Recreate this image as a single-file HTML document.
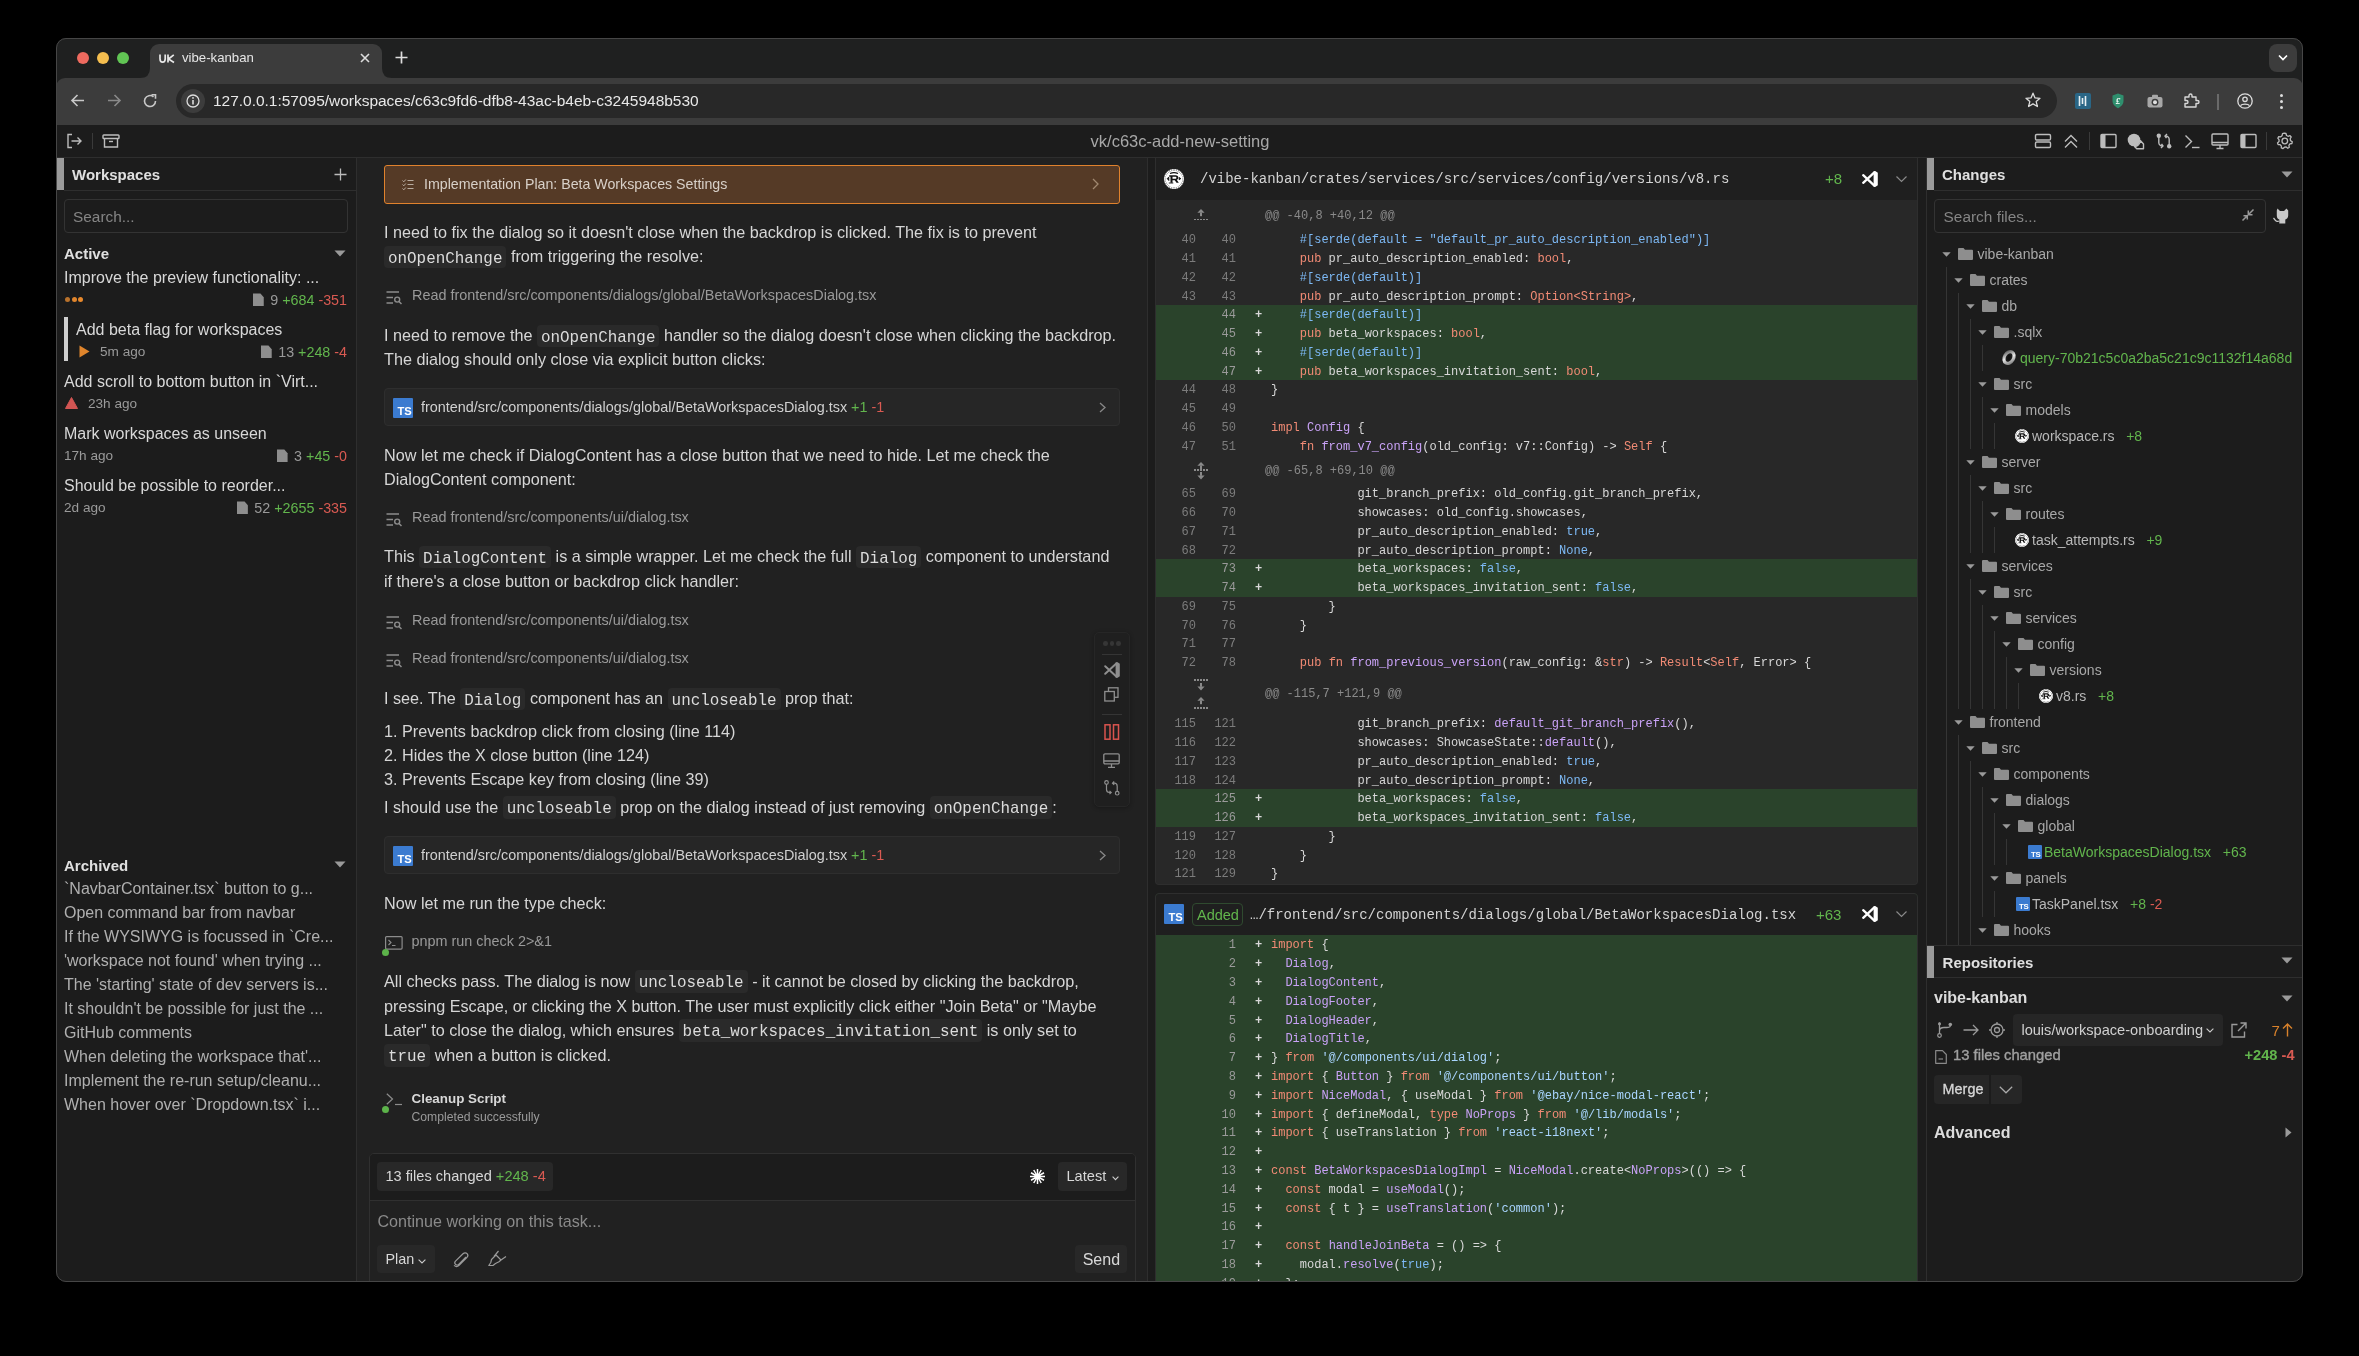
<!DOCTYPE html>
<html><head><meta charset="utf-8">
<style>
*{box-sizing:border-box;margin:0;padding:0}
html,body{width:2359px;height:1356px;background:#000;overflow:hidden;font-family:"Liberation Sans",sans-serif;color:#ddd}
.a{position:absolute}
#root{position:absolute;left:0;top:0;width:2359px;height:1356px;clip-path:inset(38px 56px 74px 56px round 10px);will-change:transform}
svg{display:block;position:absolute;overflow:visible}
.t{position:absolute;white-space:nowrap;line-height:1}
.c{font-family:"Liberation Mono",monospace;font-size:15.9px;background:#2a2a2a;border-radius:4px;padding:3.5px 4px 0.8px;color:#dcdcdc}
</style></head><body>
<div id="root">
<div class="a" style="left:56px;top:38px;width:2247px;height:50px;background:#1f2020;"></div>
<div class="a" style="left:56px;top:78px;width:2247px;height:47px;background:#3c3c3c;border-radius:9px 9px 0 0;"></div>
<div class="a" style="left:56px;top:125px;width:2247px;height:33px;background:#1c1c1c;"></div>
<div class="a" style="left:56px;top:157px;width:2247px;height:1px;background:#2e2e2e;"></div>
<div class="a" style="left:56px;top:158px;width:300px;height:1124px;background:#1c1c1c;"></div>
<div class="a" style="left:356px;top:158px;width:1px;height:1124px;background:#2e2e2e;"></div>
<div class="a" style="left:357px;top:158px;width:790px;height:1124px;background:#212121;"></div>
<div class="a" style="left:1147px;top:158px;width:1px;height:1124px;background:#2e2e2e;"></div>
<div class="a" style="left:1148px;top:158px;width:778px;height:1124px;background:#1c1c1c;"></div>
<div class="a" style="left:1926px;top:158px;width:1px;height:1124px;background:#2e2e2e;"></div>
<div class="a" style="left:1927px;top:158px;width:376px;height:1124px;background:#1c1c1c;"></div>
<div class="a" style="left:77px;top:52px;width:12px;height:12px;border-radius:50%;background:#ee6a5f"></div>
<div class="a" style="left:97px;top:52px;width:12px;height:12px;border-radius:50%;background:#f5be4f"></div>
<div class="a" style="left:117px;top:52px;width:12px;height:12px;border-radius:50%;background:#61c554"></div>
<div class="a" style="left:150px;top:44px;width:232px;height:34px;background:#3c3c3c;border-radius:9px 9px 0 0"></div>
<svg style="left:140px;top:68px" width="10" height="10" viewBox="0 0 10 10"><path d="M10 0 V10 H0 Q10 10 10 0Z" fill="#3c3c3c"/></svg>
<svg style="left:382px;top:68px" width="10" height="10" viewBox="0 0 10 10"><path d="M0 0 V10 H10 Q0 10 0 0Z" fill="#3c3c3c"/></svg>
<svg style="left:159px;top:54px;" width="17" height="9" viewBox="0 0 17 9" fill="none"><path d="M1 0.5V4.8Q1 8.2 3.6 8.2Q6.2 8.2 6.2 4.8V0.5M9 0.5V8.5M14.8 0.8L9.5 5L15 8.5" stroke="#e8e8e8" stroke-width="1.7" fill="none"/></svg>
<div class="t" style="left:182px;top:51.40px;font-size:13.2px;color:#e6e6e6;">vibe-kanban</div>
<svg style="left:360px;top:53px;" width="10" height="10" viewBox="0 0 10 10" fill="none"><path d="M1 1L9 9M9 1L1 9" stroke="#ddd" stroke-width="1.6"/></svg>
<svg style="left:395px;top:51px;" width="13" height="13" viewBox="0 0 13 13" fill="none"><path d="M6.5 0.5V12.5M0.5 6.5H12.5" stroke="#ddd" stroke-width="1.7"/></svg>
<div class="a" style="left:2269px;top:44px;width:28px;height:28px;border-radius:8px;background:#3c3c3c"></div>
<svg style="left:2278px;top:54px;" width="10" height="7" viewBox="0 0 10 7" fill="none"><path d="M1 1.5L5 5.5L9 1.5" stroke="#fff" stroke-width="1.7"/></svg>
<svg style="left:71px;top:94px;" width="14" height="13" viewBox="0 0 14 13" fill="none"><path d="M13 6.5H1.5M6.5 1L1 6.5L6.5 12" stroke="#c8c8c8" stroke-width="1.6"/></svg>
<svg style="left:107px;top:94px;" width="14" height="13" viewBox="0 0 14 13" fill="none"><path d="M1 6.5H12.5M7.5 1L13 6.5L7.5 12" stroke="#8a8a8a" stroke-width="1.6"/></svg>
<svg style="left:143px;top:94px;" width="14" height="14" viewBox="0 0 14 14" fill="none"><path d="M12.5 7A5.5 5.5 0 1 1 10.5 2.8" stroke="#c8c8c8" stroke-width="1.6"/><path d="M8.5 0.8H12.5V4.8" stroke="#c8c8c8" stroke-width="1.6"/></svg>
<div class="a" style="left:176px;top:84px;width:1881px;height:34px;border-radius:17px;background:#282828"></div>
<div class="a" style="left:181px;top:89px;width:24px;height:24px;border-radius:50%;background:#3c3c3c"></div>
<svg style="left:186px;top:94px;" width="14" height="14" viewBox="0 0 14 14" fill="none"><circle cx="7" cy="7" r="6" stroke="#ddd" stroke-width="1.3"/><path d="M7 6V10.5" stroke="#ddd" stroke-width="1.6"/><circle cx="7" cy="3.9" r="0.9" fill="#ddd"/></svg>
<div class="t" style="left:213px;top:93.25px;font-size:15.5px;color:#e8e8e8;letter-spacing:-0.02px;">127.0.0.1:57095/workspaces/c63c9fd6-dfb8-43ac-b4eb-c3245948b530</div>
<svg style="left:2025px;top:92px;" width="16" height="16" viewBox="0 0 16 16" fill="none"><path d="M8 1.2L10 5.9L15 6.3L11.2 9.6L12.4 14.5L8 11.9L3.6 14.5L4.8 9.6L1 6.3L6 5.9Z" stroke="#ddd" stroke-width="1.3" stroke-linejoin="round"/></svg>
<div class="a" style="left:2075px;top:93px;width:16px;height:16px;border-radius:2px;background:#2a6686"></div>
<svg style="left:2078px;top:95px;" width="10" height="12" viewBox="0 0 10 12" fill="none"><path d="M1.5 1V11M4.5 3V9M7.5 1V11" stroke="#e8f0f4" stroke-width="1.6"/></svg>
<svg style="left:2112px;top:93px;" width="12" height="16" viewBox="0 0 12 16" fill="none"><path d="M6 0.5L11.5 2.5V8C11.5 11.5 8.5 14 6 15.2C3.5 14 0.5 11.5 0.5 8V2.5Z" fill="#2f8f6e"/><text x="6" y="11" font-size="9" font-style="italic" font-weight="bold" fill="#fff" text-anchor="middle" font-family="Liberation Serif">£</text></svg>
<svg style="left:2147px;top:94px;" width="16" height="14" viewBox="0 0 16 14" fill="none"><rect x="0.5" y="3" width="15" height="10.5" rx="2" fill="#a8a8a8"/><rect x="5" y="0.8" width="6" height="3" rx="1" fill="#a8a8a8"/><circle cx="8" cy="8.2" r="3.4" fill="#3c3c3c"/><circle cx="8" cy="8.2" r="2" fill="#e0e0e0"/></svg>
<svg style="left:2184px;top:93px;" width="16" height="16" viewBox="0 0 16 16" fill="none"><path d="M1 4H5V2.5A1.5 1.5 0 0 1 8 2.5V4H12V7.5H13.5A1.5 1.5 0 0 1 13.5 10.5H12V14H1V10.5H2.5A1.5 1.5 0 0 0 2.5 7.5H1Z" stroke="#d8d8d8" stroke-width="1.4" stroke-linejoin="round"/></svg>
<div class="a" style="left:2217px;top:94px;width:1.5px;height:16px;background:#6a6a6a;"></div>
<svg style="left:2237px;top:93px;" width="16" height="16" viewBox="0 0 16 16" fill="none"><circle cx="8" cy="8" r="7.2" stroke="#ddd" stroke-width="1.3"/><circle cx="8" cy="6.3" r="2.2" stroke="#ddd" stroke-width="1.3"/><path d="M3.5 12.6C5 10.6 11 10.6 12.5 12.6" stroke="#ddd" stroke-width="1.3"/></svg>
<div class="a" style="left:2279.5px;top:93.5px;width:3px;height:3px;border-radius:50%;background:#ddd"></div>
<div class="a" style="left:2279.5px;top:99.5px;width:3px;height:3px;border-radius:50%;background:#ddd"></div>
<div class="a" style="left:2279.5px;top:105.5px;width:3px;height:3px;border-radius:50%;background:#ddd"></div>
<svg style="left:66px;top:133px;" width="17" height="16" viewBox="0 0 17 16" fill="none"><path d="M6 1.5H2V14.5H6" stroke="#bdbdbd" stroke-width="1.4"/><path d="M5.5 8H15M11.5 4.5L15 8L11.5 11.5" stroke="#bdbdbd" stroke-width="1.4"/></svg>
<div class="a" style="left:92px;top:133px;width:1px;height:16px;background:#3a3a3a;"></div>
<svg style="left:102px;top:134px;" width="18" height="14" viewBox="0 0 18 14" fill="none"><rect x="1" y="1" width="16" height="3.5" rx="0.8" stroke="#bdbdbd" stroke-width="1.4"/><path d="M2.5 4.5V13H15.5V4.5" stroke="#bdbdbd" stroke-width="1.4"/><path d="M7 7.5H11" stroke="#bdbdbd" stroke-width="1.4"/></svg>
<div class="t" style="left:1180px;top:132.75px;font-size:16.5px;color:#a8a8a8;transform:translateX(-50%);">vk/c63c-add-new-setting</div>
<svg style="left:2034.0px;top:133.0px;" width="18" height="16" viewBox="0 0 18 16" fill="none"><rect x="1.5" y="1.5" width="15" height="5.5" rx="1.2" stroke="#bdbdbd" stroke-width="1.4"/><rect x="1.5" y="9" width="15" height="5.5" rx="1.2" stroke="#bdbdbd" stroke-width="1.4"/></svg>
<svg style="left:2063.0px;top:133.0px;" width="16" height="16" viewBox="0 0 16 16" fill="none"><path d="M2 8.5L8 2.5L14 8.5M2 14.5L8 8.5L14 14.5" stroke="#bdbdbd" stroke-width="1.4"/></svg>
<div class="a" style="left:2089px;top:132px;width:1px;height:18px;background:#3a3a3a;"></div>
<svg style="left:2099.5px;top:133.0px;" width="17" height="16" viewBox="0 0 17 16" fill="none"><rect x="1" y="1.5" width="15" height="13" rx="1" stroke="#bdbdbd" stroke-width="1.4"/><rect x="1" y="1.5" width="4.5" height="13" fill="#bdbdbd"/></svg>
<svg style="left:2127.0px;top:132.5px;" width="18" height="17" viewBox="0 0 18 17" fill="none"><circle cx="7" cy="7" r="6.3" fill="#bdbdbd"/><path d="M7.5 13.5A6.2 6.2 0 0 0 13.3 7.6L16.5 11V15.8H9.8Z" stroke="#bdbdbd" stroke-width="1.4" stroke-linejoin="round"/></svg>
<svg style="left:2156.0px;top:132.5px;" width="16" height="17" viewBox="0 0 16 17" fill="none"><circle cx="2.8" cy="2.8" r="2.2" fill="#bdbdbd"/><circle cx="13.2" cy="13.3" r="2.2" fill="#bdbdbd"/><path d="M2.8 4V9.5C2.8 11.5 4.5 13 6.5 13" stroke="#bdbdbd" stroke-width="1.4"/><path d="M5.5 10.8L7 13L5 15" stroke="#bdbdbd" stroke-width="1.4"/><path d="M13.2 12V6.5C13.2 4.5 11.5 3 9.5 3" stroke="#bdbdbd" stroke-width="1.4"/><path d="M10.5 5.2L9 3L11 1" stroke="#bdbdbd" stroke-width="1.4"/></svg>
<svg style="left:2183.5px;top:132.5px;" width="17" height="17" viewBox="0 0 17 17" fill="none"><path d="M1.5 2.5L7.5 8.5L1.5 14.5" stroke="#bdbdbd" stroke-width="1.4"/><path d="M8 14.5H15.5" stroke="#bdbdbd" stroke-width="1.4"/></svg>
<svg style="left:2211.0px;top:132.5px;" width="18" height="17" viewBox="0 0 18 17" fill="none"><rect x="1" y="1" width="16" height="11" rx="1" stroke="#bdbdbd" stroke-width="1.4"/><path d="M1 9.5H17M9 12V15.5M5.5 15.5H12.5" stroke="#bdbdbd" stroke-width="1.4"/></svg>
<svg style="left:2239.5px;top:133.0px;" width="17" height="16" viewBox="0 0 17 16" fill="none"><rect x="1" y="1.5" width="15" height="13" rx="1" stroke="#bdbdbd" stroke-width="1.4"/><rect x="1" y="1.5" width="4.5" height="13" fill="#bdbdbd"/></svg>
<div class="a" style="left:2266px;top:132px;width:1px;height:18px;background:#3a3a3a;"></div>
<svg style="left:2276.0px;top:132.0px;" width="18" height="18" viewBox="0 0 18 18" fill="none"><path d="M8.2 1.2L10 1.5L10.5 3.5L12 4.3L14 3.6L15.2 5L14.2 6.8L14.5 8.6L16.3 9.7L15.9 11.5L13.9 11.9L12.9 13.3L13.3 15.3L11.8 16.3L10.2 15L8.5 15.2L7 16.6L5.3 15.9L5.3 13.9L4.1 12.7L2.1 12.6L1.5 10.9L3 9.6L3.1 7.8L1.8 6.2L2.7 4.6L4.7 4.8L6.1 3.7L6.5 1.7Z" stroke="#bdbdbd" stroke-width="1.3" stroke-linejoin="round"/><circle cx="8.8" cy="9" r="2.8" stroke="#bdbdbd" stroke-width="1.3"/></svg>
<div class="a" style="left:56px;top:158px;width:8px;height:32px;background:#9a9a9a;"></div>
<div class="t" style="left:72px;top:167.30px;font-size:15px;color:#e0e0e0;font-weight:bold;">Workspaces</div>
<svg style="left:334px;top:168px;" width="13" height="13" viewBox="0 0 13 13" fill="none"><path d="M6.5 0.5V12.5M0.5 6.5H12.5" stroke="#bbb" stroke-width="1.3"/></svg>
<div class="a" style="left:64px;top:190px;width:292px;height:1px;background:#2e2e2e;"></div>
<div class="a" style="left:64px;top:199px;width:284px;height:34px;border:1px solid #333;border-radius:4px"></div>
<div class="t" style="left:73px;top:208.96px;font-size:15.4px;color:#858585;">Search...</div>
<div class="t" style="left:64px;top:246.30px;font-size:15px;color:#e0e0e0;font-weight:bold;">Active</div>
<svg style="left:334px;top:250px;" width="12" height="7" viewBox="0 0 12 7" fill="none"><path d="M0.5 0.5H11.5L6 6.5Z" fill="#9a9a9a"/></svg>
<div class="t" style="left:64px;top:270.46px;font-size:16px;color:#d8d8d8;">Improve the preview functionality: ...</div>
<div class="a" style="left:64.5px;top:296.5px;width:5px;height:5px;border-radius:50%;background:#b9722c"></div>
<div class="a" style="left:71.5px;top:296.5px;width:5px;height:5px;border-radius:50%;background:#e0852c"></div>
<div class="a" style="left:77.5px;top:296.5px;width:5px;height:5px;border-radius:50%;background:#e8892c"></div>
<div class="t" style="right:2012px;top:292.90px;font-size:14.3px;color:#999"><span style="display:inline-block;width:11px;height:12.5px;margin-right:6.5px;vertical-align:-1px;background:#8e8e8e;clip-path:polygon(0 0,70% 0,100% 30%,100% 100%,0 100%)"></span>9 <span style="color:#62b64d">+684</span> <span style="color:#d95a52">-351</span></div>
<div class="a" style="left:64px;top:317px;width:4px;height:44px;background:#cfcfcf;"></div>
<div class="t" style="left:76px;top:322.46px;font-size:16px;color:#d8d8d8;">Add beta flag for workspaces</div>
<svg style="left:79px;top:345px;" width="11" height="13" viewBox="0 0 11 13" fill="none"><path d="M0.5 0.5L10.5 6.5L0.5 12.5Z" fill="#e0852c"/></svg>
<div class="t" style="left:100px;top:345.49px;font-size:13.6px;color:#9a9a9a;">5m ago</div>
<div class="t" style="right:2012px;top:344.90px;font-size:14.3px;color:#999"><span style="display:inline-block;width:11px;height:12.5px;margin-right:6.5px;vertical-align:-1px;background:#8e8e8e;clip-path:polygon(0 0,70% 0,100% 30%,100% 100%,0 100%)"></span>13 <span style="color:#62b64d">+248</span> <span style="color:#d95a52">-4</span></div>
<div class="t" style="left:64px;top:374.46px;font-size:16px;color:#d8d8d8;">Add scroll to bottom button in `Virt...</div>
<svg style="left:65px;top:397px;" width="13" height="12" viewBox="0 0 13 12" fill="none"><path d="M6.5 0.5L12.5 11.5H0.5Z" fill="#d25553" stroke="#d25553" stroke-linejoin="round"/></svg>
<div class="t" style="left:88px;top:397.49px;font-size:13.6px;color:#9a9a9a;">23h ago</div>
<div class="t" style="left:64px;top:426.46px;font-size:16px;color:#d8d8d8;">Mark workspaces as unseen</div>
<div class="t" style="left:64px;top:449.49px;font-size:13.6px;color:#9a9a9a;">17h ago</div>
<div class="t" style="right:2012px;top:448.90px;font-size:14.3px;color:#999"><span style="display:inline-block;width:11px;height:12.5px;margin-right:6.5px;vertical-align:-1px;background:#8e8e8e;clip-path:polygon(0 0,70% 0,100% 30%,100% 100%,0 100%)"></span>3 <span style="color:#62b64d">+45</span> <span style="color:#d95a52">-0</span></div>
<div class="t" style="left:64px;top:478.46px;font-size:16px;color:#d8d8d8;">Should be possible to reorder...</div>
<div class="t" style="left:64px;top:501.49px;font-size:13.6px;color:#9a9a9a;">2d ago</div>
<div class="t" style="right:2012px;top:500.90px;font-size:14.3px;color:#999"><span style="display:inline-block;width:11px;height:12.5px;margin-right:6.5px;vertical-align:-1px;background:#8e8e8e;clip-path:polygon(0 0,70% 0,100% 30%,100% 100%,0 100%)"></span>52 <span style="color:#62b64d">+2655</span> <span style="color:#d95a52">-335</span></div>
<div class="t" style="left:64px;top:857.80px;font-size:15px;color:#e0e0e0;font-weight:bold;">Archived</div>
<svg style="left:334px;top:861px;" width="12" height="7" viewBox="0 0 12 7" fill="none"><path d="M0.5 0.5H11.5L6 6.5Z" fill="#9a9a9a"/></svg>
<div class="t" style="left:64px;top:881.46px;font-size:16px;color:#b0b0b0;">`NavbarContainer.tsx` button to g...</div>
<div class="t" style="left:64px;top:905.46px;font-size:16px;color:#b0b0b0;">Open command bar from navbar</div>
<div class="t" style="left:64px;top:929.46px;font-size:16px;color:#b0b0b0;">If the WYSIWYG is focussed in `Cre...</div>
<div class="t" style="left:64px;top:953.46px;font-size:16px;color:#b0b0b0;">'workspace not found' when trying ...</div>
<div class="t" style="left:64px;top:977.46px;font-size:16px;color:#b0b0b0;">The 'starting' state of dev servers is...</div>
<div class="t" style="left:64px;top:1001.46px;font-size:16px;color:#b0b0b0;">It shouldn't be possible for just the ...</div>
<div class="t" style="left:64px;top:1025.46px;font-size:16px;color:#b0b0b0;">GitHub comments</div>
<div class="t" style="left:64px;top:1049.46px;font-size:16px;color:#b0b0b0;">When deleting the workspace that'...</div>
<div class="t" style="left:64px;top:1073.46px;font-size:16px;color:#b0b0b0;">Implement the re-run setup/cleanu...</div>
<div class="t" style="left:64px;top:1097.46px;font-size:16px;color:#b0b0b0;">When hover over `Dropdown.tsx` i...</div>
<div class="a" style="left:384px;top:165px;width:736px;height:39px;background:#553a26;border:1.5px solid #e0822d;border-radius:3px"></div>
<svg style="left:402px;top:179px;" width="12" height="11" viewBox="0 0 12 11" fill="none"><path d="M0.5 1.5L1.8 2.8L3.8 0.5M0.5 5.5L1.8 6.8L3.8 4.5M0.5 9.5L1.8 10.8L3.8 8.5" stroke="#b8aca0" stroke-width="1"/><path d="M5.5 1.5H11.5M5.5 5.5H11.5M5.5 9.5H11.5" stroke="#b8aca0" stroke-width="1.2"/></svg>
<div class="t" style="left:424px;top:176.98px;font-size:14.2px;color:#d8d0c8;">Implementation Plan: Beta Workspaces Settings</div>
<svg style="left:1092px;top:178px;" width="7" height="12" viewBox="0 0 7 12" fill="none"><path d="M1 1L6 6L1 11" stroke="#a08870" stroke-width="1.3"/></svg>
<div class="t" style="left:384px;top:224.29px;font-size:16.2px;color:#d6d6d6;">I need to fix the dialog so it doesn't close when the backdrop is clicked. The fix is to prevent</div>
<div class="t" style="left:384px;top:248.29px;font-size:16.2px;color:#d6d6d6;"><span class="c">onOpenChange</span> from triggering the resolve:</div>
<svg style="left:386px;top:290.5px;" width="17" height="13" viewBox="0 0 17 13" fill="none"><path d="M0.5 1H13M0.5 6.5H7M0.5 12H7" stroke="#8c8c8c" stroke-width="1.4"/><circle cx="11.2" cy="8.6" r="2.5" stroke="#8c8c8c" stroke-width="1.4"/><path d="M13 10.5L15.5 13" stroke="#8c8c8c" stroke-width="1.5"/></svg>
<div class="t" style="left:412px;top:287.81px;font-size:14.4px;color:#9a9a9a;">Read frontend/src/components/dialogs/global/BetaWorkspacesDialog.tsx</div>
<div class="t" style="left:384px;top:327.29px;font-size:16.2px;color:#d6d6d6;">I need to remove the <span class="c">onOpenChange</span> handler so the dialog doesn't close when clicking the backdrop.</div>
<div class="t" style="left:384px;top:351.29px;font-size:16.2px;color:#d6d6d6;">The dialog should only close via explicit button clicks:</div>
<div class="a" style="left:384px;top:388px;width:736px;height:38px;background:#262626;border:1px solid #2e2e2e;border-radius:4px"></div>
<div class="a" style="left:393px;top:398px;width:20px;height:20px;background:#3b7bd0;border-radius:1px"></div>
<div class="t" style="left:393px;top:406.0px;width:18.5px;text-align:right;font-size:11.200000000000001px;font-weight:bold;color:#fff;letter-spacing:-0.2px">TS</div>
<div class="t" style="left:421px;top:399.81px;font-size:14.4px;color:#d0d0d0;">frontend/src/components/dialogs/global/BetaWorkspacesDialog.tsx <span style="color:#62b64d">+1</span> <span style="color:#d95a52">-1</span></div>
<svg style="left:1099px;top:402px;" width="7" height="11" viewBox="0 0 7 11" fill="none"><path d="M1 1L6 5.5L1 10" stroke="#888" stroke-width="1.3"/></svg>
<div class="t" style="left:384px;top:447.29px;font-size:16.2px;color:#d6d6d6;">Now let me check if DialogContent has a close button that we need to hide. Let me check the</div>
<div class="t" style="left:384px;top:471.29px;font-size:16.2px;color:#d6d6d6;">DialogContent component:</div>
<svg style="left:386px;top:512.5px;" width="17" height="13" viewBox="0 0 17 13" fill="none"><path d="M0.5 1H13M0.5 6.5H7M0.5 12H7" stroke="#8c8c8c" stroke-width="1.4"/><circle cx="11.2" cy="8.6" r="2.5" stroke="#8c8c8c" stroke-width="1.4"/><path d="M13 10.5L15.5 13" stroke="#8c8c8c" stroke-width="1.5"/></svg>
<div class="t" style="left:412px;top:509.81px;font-size:14.4px;color:#9a9a9a;">Read frontend/src/components/ui/dialog.tsx</div>
<div class="t" style="left:384px;top:548.29px;font-size:16.2px;color:#d6d6d6;">This <span class="c">DialogContent</span> is a simple wrapper. Let me check the full <span class="c">Dialog</span> component to understand</div>
<div class="t" style="left:384px;top:573.29px;font-size:16.2px;color:#d6d6d6;">if there's a close button or backdrop click handler:</div>
<svg style="left:386px;top:615.5px;" width="17" height="13" viewBox="0 0 17 13" fill="none"><path d="M0.5 1H13M0.5 6.5H7M0.5 12H7" stroke="#8c8c8c" stroke-width="1.4"/><circle cx="11.2" cy="8.6" r="2.5" stroke="#8c8c8c" stroke-width="1.4"/><path d="M13 10.5L15.5 13" stroke="#8c8c8c" stroke-width="1.5"/></svg>
<div class="t" style="left:412px;top:612.81px;font-size:14.4px;color:#9a9a9a;">Read frontend/src/components/ui/dialog.tsx</div>
<svg style="left:386px;top:653.5px;" width="17" height="13" viewBox="0 0 17 13" fill="none"><path d="M0.5 1H13M0.5 6.5H7M0.5 12H7" stroke="#8c8c8c" stroke-width="1.4"/><circle cx="11.2" cy="8.6" r="2.5" stroke="#8c8c8c" stroke-width="1.4"/><path d="M13 10.5L15.5 13" stroke="#8c8c8c" stroke-width="1.5"/></svg>
<div class="t" style="left:412px;top:650.81px;font-size:14.4px;color:#9a9a9a;">Read frontend/src/components/ui/dialog.tsx</div>
<div class="t" style="left:384px;top:690.29px;font-size:16.2px;color:#d6d6d6;">I see. The <span class="c">Dialog</span> component has an <span class="c">uncloseable</span> prop that:</div>
<div class="t" style="left:384px;top:722.79px;font-size:16.2px;color:#d6d6d6;">1. Prevents backdrop click from closing (line 114)</div>
<div class="t" style="left:384px;top:746.79px;font-size:16.2px;color:#d6d6d6;">2. Hides the X close button (line 124)</div>
<div class="t" style="left:384px;top:770.79px;font-size:16.2px;color:#d6d6d6;">3. Prevents Escape key from closing (line 39)</div>
<div class="t" style="left:384px;top:798.79px;font-size:16.2px;color:#d6d6d6;">I should use the <span class="c">uncloseable</span> prop on the dialog instead of just removing <span class="c">onOpenChange</span>:</div>
<div class="a" style="left:384px;top:836px;width:736px;height:38px;background:#262626;border:1px solid #2e2e2e;border-radius:4px"></div>
<div class="a" style="left:393px;top:846px;width:20px;height:20px;background:#3b7bd0;border-radius:1px"></div>
<div class="t" style="left:393px;top:854.0px;width:18.5px;text-align:right;font-size:11.200000000000001px;font-weight:bold;color:#fff;letter-spacing:-0.2px">TS</div>
<div class="t" style="left:421px;top:847.81px;font-size:14.4px;color:#d0d0d0;">frontend/src/components/dialogs/global/BetaWorkspacesDialog.tsx <span style="color:#62b64d">+1</span> <span style="color:#d95a52">-1</span></div>
<svg style="left:1099px;top:850px;" width="7" height="11" viewBox="0 0 7 11" fill="none"><path d="M1 1L6 5.5L1 10" stroke="#888" stroke-width="1.3"/></svg>
<div class="t" style="left:384px;top:894.79px;font-size:16.2px;color:#d6d6d6;">Now let me run the type check:</div>
<svg style="left:385px;top:936px;" width="18" height="14" viewBox="0 0 18 14" fill="none"><rect x="0.6" y="0.6" width="16.5" height="12.5" rx="1" stroke="#8c8c8c" stroke-width="1.2"/><path d="M3.5 4L6 6.5L3.5 9M7 9.5H10.5" stroke="#8c8c8c" stroke-width="1.1"/></svg>
<div class="a" style="left:381.5px;top:948.5px;width:7px;height:7px;border-radius:50%;background:#5cb34a"></div>
<div class="t" style="left:411.5px;top:934.31px;font-size:14.4px;color:#9a9a9a;">pnpm run check 2&gt;&amp;1</div>
<div class="t" style="left:384px;top:972.79px;font-size:16.2px;color:#d6d6d6;">All checks pass. The dialog is now <span class="c">uncloseable</span> - it cannot be closed by clicking the backdrop,</div>
<div class="t" style="left:384px;top:997.79px;font-size:16.2px;color:#d6d6d6;">pressing Escape, or clicking the X button. The user must explicitly click either "Join Beta" or "Maybe</div>
<div class="t" style="left:384px;top:1021.79px;font-size:16.2px;color:#d6d6d6;">Later" to close the dialog, which ensures <span class="c">beta_workspaces_invitation_sent</span> is only set to</div>
<div class="t" style="left:384px;top:1046.79px;font-size:16.2px;color:#d6d6d6;"><span class="c">true</span> when a button is clicked.</div>
<svg style="left:386px;top:1093px;" width="17" height="13" viewBox="0 0 17 13" fill="none"><path d="M0.8 0.8L6.5 6L0.8 11.2" stroke="#8c8c8c" stroke-width="1.2"/><path d="M9 11.5H16" stroke="#8c8c8c" stroke-width="1.2"/></svg>
<div class="a" style="left:381.5px;top:1105.5px;width:7px;height:7px;border-radius:50%;background:#5cb34a"></div>
<div class="t" style="left:411.5px;top:1091.96px;font-size:13.4px;color:#d8d8d8;font-weight:bold;">Cleanup Script</div>
<div class="t" style="left:411.5px;top:1111.17px;font-size:12.2px;color:#9a9a9a;">Completed successfully</div>
<div class="a" style="left:1094px;top:632px;width:36px;height:175px;background:#1f1f1f;border:1px solid #262626;border-radius:5px;box-shadow:0 1px 4px rgba(0,0,0,0.3)"></div>
<div class="a" style="left:1103.2px;top:641px;width:4.6px;height:4.6px;border-radius:50%;background:#363636"></div>
<div class="a" style="left:1109.7px;top:641px;width:4.6px;height:4.6px;border-radius:50%;background:#363636"></div>
<div class="a" style="left:1116.2px;top:641px;width:4.6px;height:4.6px;border-radius:50%;background:#363636"></div>
<div class="a" style="left:1102px;top:654px;width:20px;height:1px;background:#353535;"></div>
<svg style="left:1104px;top:662px;" width="16" height="16" viewBox="0 0 16 16" fill="none"><path d="M12.6 1.2L1.2 11.8M12.6 14.8L1.2 4.2" stroke="#8f8f8f" stroke-width="2" stroke-linecap="round"/><path d="M11.6 0.4L13.6 0.2L15.8 1.8V14.2L13.6 15.8L11.6 15.6Z" fill="#8f8f8f"/></svg>
<svg style="left:1104px;top:687px;" width="15" height="15" viewBox="0 0 15 15" fill="none"><rect x="4.5" y="0.8" width="9.5" height="9.5" stroke="#8f8f8f" stroke-width="1.3"/><rect x="0.8" y="4.5" width="9.5" height="9.5" fill="#1f1f1f" stroke="#8f8f8f" stroke-width="1.3"/></svg>
<div class="a" style="left:1102px;top:714px;width:20px;height:1px;background:#353535;"></div>
<svg style="left:1104px;top:724px;" width="16" height="16" viewBox="0 0 16 16" fill="none"><rect x="1" y="0.8" width="5" height="14.4" stroke="#d9544f" stroke-width="1.5"/><rect x="9.5" y="0.8" width="5" height="14.4" stroke="#d9544f" stroke-width="1.5"/></svg>
<svg style="left:1103px;top:753px;" width="17" height="15" viewBox="0 0 17 15" fill="none"><rect x="0.8" y="0.8" width="15.4" height="10" rx="1.2" stroke="#8f8f8f" stroke-width="1.3"/><path d="M0.8 8H16.2M8.5 11V14.3M5 14.3H12" stroke="#8f8f8f" stroke-width="1.3"/></svg>
<svg style="left:1104px;top:780px;" width="16" height="16" viewBox="0 0 16 16" fill="none"><circle cx="2.5" cy="2.5" r="1.8" stroke="#8f8f8f" stroke-width="1.2"/><circle cx="13.2" cy="13.2" r="1.8" stroke="#8f8f8f" stroke-width="1.2"/><path d="M2.5 4.3V9.5C2.5 11.2 3.8 12.5 5.5 12.5H7M5.5 10.8L7.2 12.5L5.5 14.2M13.2 11.4V6.2C13.2 4.5 11.9 3.2 10.2 3.2H8.7M10.2 1.5L8.5 3.2L10.2 4.9" stroke="#8f8f8f" stroke-width="1.2"/></svg>
<div class="a" style="left:369px;top:1153px;width:767px;height:140px;background:#212121;border:1px solid #303030;border-radius:5px"></div>
<div class="a" style="left:370px;top:1154px;width:765px;height:46px;background:#1c1c1c;border-radius:4px 4px 0 0"></div>
<div class="a" style="left:370px;top:1200px;width:765px;height:1px;background:#303030;"></div>
<div class="a" style="left:377px;top:1162px;width:176px;height:29px;background:#282828;border-radius:4px"></div>
<div class="t" style="left:385.5px;top:1168.84px;font-size:14.6px;color:#d8d8d8;">13 files changed <span style="color:#62b64d">+248</span> <span style="color:#d95a52">-4</span></div>
<svg style="left:1029px;top:1168px;" width="17" height="17" viewBox="0 0 17 17" fill="none"><path d="M8.5 8.5L16.00 8.50" stroke="#fff" stroke-width="1.5"/><path d="M8.5 8.5L15.00 12.25" stroke="#fff" stroke-width="1.5"/><path d="M8.5 8.5L12.25 15.00" stroke="#fff" stroke-width="1.5"/><path d="M8.5 8.5L8.50 16.00" stroke="#fff" stroke-width="1.5"/><path d="M8.5 8.5L4.75 15.00" stroke="#fff" stroke-width="1.5"/><path d="M8.5 8.5L2.00 12.25" stroke="#fff" stroke-width="1.5"/><path d="M8.5 8.5L1.00 8.50" stroke="#fff" stroke-width="1.5"/><path d="M8.5 8.5L2.00 4.75" stroke="#fff" stroke-width="1.5"/><path d="M8.5 8.5L4.75 2.00" stroke="#fff" stroke-width="1.5"/><path d="M8.5 8.5L8.50 1.00" stroke="#fff" stroke-width="1.5"/><path d="M8.5 8.5L12.25 2.00" stroke="#fff" stroke-width="1.5"/><path d="M8.5 8.5L15.00 4.75" stroke="#fff" stroke-width="1.5"/><circle cx="8.5" cy="8.5" r="3" fill="#fff"/></svg>
<div class="a" style="left:1058px;top:1162px;width:69px;height:29px;background:#282828;border-radius:4px"></div>
<div class="t" style="left:1066.5px;top:1168.84px;font-size:14.6px;color:#d8d8d8;">Latest</div>
<svg style="left:1112px;top:1176px;" width="7" height="5" viewBox="0 0 7 5" fill="none"><path d="M0.6 0.6L3.5 3.6L6.4 0.6" stroke="#ccc" stroke-width="1.1"/></svg>
<div class="t" style="left:377.5px;top:1213.37px;font-size:16.1px;color:#8a8a8a;">Continue working on this task...</div>
<div class="a" style="left:377px;top:1245px;width:58px;height:28px;background:#282828;border-radius:4px"></div>
<div class="t" style="left:385.5px;top:1251.81px;font-size:14.4px;color:#d8d8d8;">Plan</div>
<svg style="left:418px;top:1259px;" width="8" height="5" viewBox="0 0 8 5" fill="none"><path d="M0.6 0.6L4 4L7.4 0.6" stroke="#ccc" stroke-width="1.1"/></svg>
<svg style="left:453px;top:1251px;" width="15" height="17" viewBox="0 0 15 17" fill="none"><path d="M12.5 4.5L5.2 11.8C4.3 12.7 2.8 12.7 2 11.8C1.1 10.9 1.1 9.5 2 8.6L9.5 1.2C10.8 0 12.6 0 13.6 1.1C14.6 2.2 14.5 3.9 13.3 5.1L5.6 12.9C3.9 14.5 1.6 14.4 0.6 12.8" stroke="#9a9a9a" stroke-width="1.2" transform="translate(0.5 1.5)"/></svg>
<svg style="left:488px;top:1250px;" width="19" height="17" viewBox="0 0 19 17" fill="none"><path d="M10.5 1L6 6.5M8 5L13 10L18 6.5M8 5L3.5 9.5L2.8 12.5L0.8 15.5H5L7.5 13.5L11 11.8L13 10" stroke="#9a9a9a" stroke-width="1.2" stroke-linejoin="round"/></svg>
<div class="a" style="left:1075px;top:1245px;width:52px;height:28px;background:#282828;border-radius:4px"></div>
<div class="t" style="left:1082.7px;top:1252.46px;font-size:16px;color:#d8d8d8;">Send</div>
<div class="a" style="left:1155px;top:158px;width:763px;height:727px;background:#282828;border:1px solid #2e2e2e;border-top:none;border-radius:0 0 4px 4px"></div>
<div class="a" style="left:1156px;top:158px;width:761px;height:42px;background:#1f1f1f;"></div>
<svg style="left:1164px;top:169px;" width="20" height="20" viewBox="0 0 20 20" fill="none"><g transform="scale(1.0)"><circle cx="10" cy="10" r="8.6" fill="#fff"/><circle cx="19.20" cy="10.00" r="0.9" fill="#fff"/><circle cx="19.02" cy="11.79" r="0.9" fill="#fff"/><circle cx="18.50" cy="13.52" r="0.9" fill="#fff"/><circle cx="17.65" cy="15.11" r="0.9" fill="#fff"/><circle cx="16.51" cy="16.51" r="0.9" fill="#fff"/><circle cx="15.11" cy="17.65" r="0.9" fill="#fff"/><circle cx="13.52" cy="18.50" r="0.9" fill="#fff"/><circle cx="11.79" cy="19.02" r="0.9" fill="#fff"/><circle cx="10.00" cy="19.20" r="0.9" fill="#fff"/><circle cx="8.21" cy="19.02" r="0.9" fill="#fff"/><circle cx="6.48" cy="18.50" r="0.9" fill="#fff"/><circle cx="4.89" cy="17.65" r="0.9" fill="#fff"/><circle cx="3.49" cy="16.51" r="0.9" fill="#fff"/><circle cx="2.35" cy="15.11" r="0.9" fill="#fff"/><circle cx="1.50" cy="13.52" r="0.9" fill="#fff"/><circle cx="0.98" cy="11.79" r="0.9" fill="#fff"/><circle cx="0.80" cy="10.00" r="0.9" fill="#fff"/><circle cx="0.98" cy="8.21" r="0.9" fill="#fff"/><circle cx="1.50" cy="6.48" r="0.9" fill="#fff"/><circle cx="2.35" cy="4.89" r="0.9" fill="#fff"/><circle cx="3.49" cy="3.49" r="0.9" fill="#fff"/><circle cx="4.89" cy="2.35" r="0.9" fill="#fff"/><circle cx="6.48" cy="1.50" r="0.9" fill="#fff"/><circle cx="8.21" cy="0.98" r="0.9" fill="#fff"/><circle cx="10.00" cy="0.80" r="0.9" fill="#fff"/><circle cx="11.79" cy="0.98" r="0.9" fill="#fff"/><circle cx="13.52" cy="1.50" r="0.9" fill="#fff"/><circle cx="15.11" cy="2.35" r="0.9" fill="#fff"/><circle cx="16.51" cy="3.49" r="0.9" fill="#fff"/><circle cx="17.65" cy="4.89" r="0.9" fill="#fff"/><circle cx="18.50" cy="6.48" r="0.9" fill="#fff"/><circle cx="19.02" cy="8.21" r="0.9" fill="#fff"/><path d="M5.2 6.2H11.6C13.4 6.2 14.4 7.1 14.4 8.6C14.4 9.8 13.7 10.5 12.7 10.8L14.8 13.8H12.5L10.8 11.2H8.5V13.8H6.5V7.7H5.2Z M8.5 7.8V9.7H11.3C12 9.7 12.4 9.3 12.4 8.75C12.4 8.2 12 7.8 11.3 7.8Z" fill="#111" fill-rule="evenodd"/><path d="M4.8 14H9.3M3.2 9.5L4.8 8.2V11.5Z M15.2 8.5L16.8 9.6L15.2 10.8Z" fill="#111" stroke="#111" stroke-width="0.9"/><path d="M6 4.5Q10 2.6 14 4.5" stroke="#111" stroke-width="1.3" fill="none"/></g></svg>
<div class="t" style="left:1200px;top:172.27px;font-size:14px;color:#d4d4d4;font-family:'Liberation Mono',monospace;letter-spacing:-0.0px;">/vibe-kanban/crates/services/src/services/config/versions/v8.rs</div>
<div class="t" style="left:1825px;top:170.80px;font-size:15px;color:#62b64d;">+8</div>
<svg style="left:1862px;top:171px;" width="16" height="16" viewBox="0 0 16 16" fill="none"><path d="M12.6 1.2L1.2 11.8M12.6 14.8L1.2 4.2" stroke="#fff" stroke-width="2.3" stroke-linecap="round"/><path d="M11.6 0.4L13.6 0.2L15.8 1.8V14.2L13.6 15.8L11.6 15.6Z" fill="#fff"/></svg>
<svg style="left:1896px;top:176px;" width="11" height="6" viewBox="0 0 11 6" fill="none"><path d="M0.5 0.5L5.5 5.5L10.5 0.5" stroke="#8a8a8a" stroke-width="1.2"/></svg>
<div class="t" style="left:1265px;top:210.30px;font-size:12px;font-family:'Liberation Mono',monospace;color:#8a8a8a">@@ -40,8 +40,12 @@</div>
<svg style="left:1197px;top:209px;" width="8" height="8" viewBox="0 0 8 8" fill="none"><path d="M4 0L7.6 3.8H0.4Z" fill="#8a8a8a"/><rect x="3" y="3.6" width="2" height="3.6" fill="#8a8a8a"/></svg>
<div class="a" style="left:1194.2px;top:218.8px;width:1.6px;height:1.6px;background:#8a8a8a;"></div>
<div class="a" style="left:1197.2px;top:218.8px;width:1.6px;height:1.6px;background:#8a8a8a;"></div>
<div class="a" style="left:1200.2px;top:218.8px;width:1.6px;height:1.6px;background:#8a8a8a;"></div>
<div class="a" style="left:1203.2px;top:218.8px;width:1.6px;height:1.6px;background:#8a8a8a;"></div>
<div class="a" style="left:1206.2px;top:218.8px;width:1.6px;height:1.6px;background:#8a8a8a;"></div>
<div class="t" style="right:1163px;top:234.38px;font-size:12px;font-family:'Liberation Mono',monospace;color:#7c7c7c">40</div>
<div class="t" style="right:1123px;top:234.38px;font-size:12px;font-family:'Liberation Mono',monospace;color:#7c7c7c">40</div>
<div class="t" style="left:1271px;top:234.38px;font-size:12px;font-family:'Liberation Mono',monospace;color:#d8d8d8;white-space:pre">    <span style="color:#7db9f5">#[serde(default = "default_pr_auto_description_enabled")]</span></div>
<div class="t" style="right:1163px;top:253.13px;font-size:12px;font-family:'Liberation Mono',monospace;color:#7c7c7c">41</div>
<div class="t" style="right:1123px;top:253.13px;font-size:12px;font-family:'Liberation Mono',monospace;color:#7c7c7c">41</div>
<div class="t" style="left:1271px;top:253.13px;font-size:12px;font-family:'Liberation Mono',monospace;color:#d8d8d8;white-space:pre">    <span style="color:#f28b75">pub</span> pr_auto_description_enabled: <span style="color:#f28b75">bool</span>,</div>
<div class="t" style="right:1163px;top:271.88px;font-size:12px;font-family:'Liberation Mono',monospace;color:#7c7c7c">42</div>
<div class="t" style="right:1123px;top:271.88px;font-size:12px;font-family:'Liberation Mono',monospace;color:#7c7c7c">42</div>
<div class="t" style="left:1271px;top:271.88px;font-size:12px;font-family:'Liberation Mono',monospace;color:#d8d8d8;white-space:pre">    <span style="color:#7db9f5">#[serde(default)]</span></div>
<div class="t" style="right:1163px;top:290.63px;font-size:12px;font-family:'Liberation Mono',monospace;color:#7c7c7c">43</div>
<div class="t" style="right:1123px;top:290.63px;font-size:12px;font-family:'Liberation Mono',monospace;color:#7c7c7c">43</div>
<div class="t" style="left:1271px;top:290.63px;font-size:12px;font-family:'Liberation Mono',monospace;color:#d8d8d8;white-space:pre">    <span style="color:#f28b75">pub</span> pr_auto_description_prompt: <span style="color:#f28b75">Option&lt;String&gt;</span>,</div>
<div class="a" style="left:1156px;top:305.0px;width:761px;height:18.75px;background:#2a432b;"></div>
<div class="t" style="right:1123px;top:309.38px;font-size:12px;font-family:'Liberation Mono',monospace;color:#9a9a9a">44</div>
<div class="t" style="left:1255px;top:309.38px;font-size:12px;font-family:'Liberation Mono',monospace;color:#d8d8d8;font-weight:bold">+</div>
<div class="t" style="left:1271px;top:309.38px;font-size:12px;font-family:'Liberation Mono',monospace;color:#d8d8d8;white-space:pre">    <span style="color:#7db9f5">#[serde(default)]</span></div>
<div class="a" style="left:1156px;top:323.75px;width:761px;height:18.75px;background:#2a432b;"></div>
<div class="t" style="right:1123px;top:328.13px;font-size:12px;font-family:'Liberation Mono',monospace;color:#9a9a9a">45</div>
<div class="t" style="left:1255px;top:328.13px;font-size:12px;font-family:'Liberation Mono',monospace;color:#d8d8d8;font-weight:bold">+</div>
<div class="t" style="left:1271px;top:328.13px;font-size:12px;font-family:'Liberation Mono',monospace;color:#d8d8d8;white-space:pre">    <span style="color:#f28b75">pub</span> beta_workspaces: <span style="color:#f28b75">bool</span>,</div>
<div class="a" style="left:1156px;top:342.5px;width:761px;height:18.75px;background:#2a432b;"></div>
<div class="t" style="right:1123px;top:346.88px;font-size:12px;font-family:'Liberation Mono',monospace;color:#9a9a9a">46</div>
<div class="t" style="left:1255px;top:346.88px;font-size:12px;font-family:'Liberation Mono',monospace;color:#d8d8d8;font-weight:bold">+</div>
<div class="t" style="left:1271px;top:346.88px;font-size:12px;font-family:'Liberation Mono',monospace;color:#d8d8d8;white-space:pre">    <span style="color:#7db9f5">#[serde(default)]</span></div>
<div class="a" style="left:1156px;top:361.25px;width:761px;height:18.75px;background:#2a432b;"></div>
<div class="t" style="right:1123px;top:365.63px;font-size:12px;font-family:'Liberation Mono',monospace;color:#9a9a9a">47</div>
<div class="t" style="left:1255px;top:365.63px;font-size:12px;font-family:'Liberation Mono',monospace;color:#d8d8d8;font-weight:bold">+</div>
<div class="t" style="left:1271px;top:365.63px;font-size:12px;font-family:'Liberation Mono',monospace;color:#d8d8d8;white-space:pre">    <span style="color:#f28b75">pub</span> beta_workspaces_invitation_sent: <span style="color:#f28b75">bool</span>,</div>
<div class="t" style="right:1163px;top:384.38px;font-size:12px;font-family:'Liberation Mono',monospace;color:#7c7c7c">44</div>
<div class="t" style="right:1123px;top:384.38px;font-size:12px;font-family:'Liberation Mono',monospace;color:#7c7c7c">48</div>
<div class="t" style="left:1271px;top:384.38px;font-size:12px;font-family:'Liberation Mono',monospace;color:#d8d8d8;white-space:pre">}</div>
<div class="t" style="right:1163px;top:403.13px;font-size:12px;font-family:'Liberation Mono',monospace;color:#7c7c7c">45</div>
<div class="t" style="right:1123px;top:403.13px;font-size:12px;font-family:'Liberation Mono',monospace;color:#7c7c7c">49</div>
<div class="t" style="left:1271px;top:403.13px;font-size:12px;font-family:'Liberation Mono',monospace;color:#d8d8d8;white-space:pre"></div>
<div class="t" style="right:1163px;top:421.88px;font-size:12px;font-family:'Liberation Mono',monospace;color:#7c7c7c">46</div>
<div class="t" style="right:1123px;top:421.88px;font-size:12px;font-family:'Liberation Mono',monospace;color:#7c7c7c">50</div>
<div class="t" style="left:1271px;top:421.88px;font-size:12px;font-family:'Liberation Mono',monospace;color:#d8d8d8;white-space:pre"><span style="color:#f28b75">impl</span> <span style="color:#c9a2f7">Config</span> {</div>
<div class="t" style="right:1163px;top:440.63px;font-size:12px;font-family:'Liberation Mono',monospace;color:#7c7c7c">47</div>
<div class="t" style="right:1123px;top:440.63px;font-size:12px;font-family:'Liberation Mono',monospace;color:#7c7c7c">51</div>
<div class="t" style="left:1271px;top:440.63px;font-size:12px;font-family:'Liberation Mono',monospace;color:#d8d8d8;white-space:pre">    <span style="color:#f28b75">fn</span> <span style="color:#c9a2f7">from_v7_config</span>(old_config: v7::Config) -&gt; <span style="color:#f28b75">Self</span> {</div>
<div class="t" style="left:1265px;top:464.80px;font-size:12px;font-family:'Liberation Mono',monospace;color:#8a8a8a">@@ -65,8 +69,10 @@</div>
<svg style="left:1197px;top:462.0px;" width="8" height="8" viewBox="0 0 8 8" fill="none"><path d="M4 0L7.6 3.8H0.4Z" fill="#8a8a8a"/><rect x="3" y="3.6" width="2" height="3.6" fill="#8a8a8a"/></svg>
<div class="a" style="left:1194.2px;top:469.3px;width:1.6px;height:1.6px;background:#8a8a8a;"></div>
<div class="a" style="left:1197.2px;top:469.3px;width:1.6px;height:1.6px;background:#8a8a8a;"></div>
<div class="a" style="left:1200.2px;top:469.3px;width:1.6px;height:1.6px;background:#8a8a8a;"></div>
<div class="a" style="left:1203.2px;top:469.3px;width:1.6px;height:1.6px;background:#8a8a8a;"></div>
<div class="a" style="left:1206.2px;top:469.3px;width:1.6px;height:1.6px;background:#8a8a8a;"></div>
<svg style="left:1197px;top:472.0px;" width="8" height="8" viewBox="0 0 8 8" fill="none"><rect x="3" y="0" width="2" height="3.8" fill="#8a8a8a"/><path d="M4 7.4L7.6 3.6H0.4Z" fill="#8a8a8a"/></svg>
<div class="t" style="right:1163px;top:488.38px;font-size:12px;font-family:'Liberation Mono',monospace;color:#7c7c7c">65</div>
<div class="t" style="right:1123px;top:488.38px;font-size:12px;font-family:'Liberation Mono',monospace;color:#7c7c7c">69</div>
<div class="t" style="left:1271px;top:488.38px;font-size:12px;font-family:'Liberation Mono',monospace;color:#d8d8d8;white-space:pre">            git_branch_prefix: old_config.git_branch_prefix,</div>
<div class="t" style="right:1163px;top:507.13px;font-size:12px;font-family:'Liberation Mono',monospace;color:#7c7c7c">66</div>
<div class="t" style="right:1123px;top:507.13px;font-size:12px;font-family:'Liberation Mono',monospace;color:#7c7c7c">70</div>
<div class="t" style="left:1271px;top:507.13px;font-size:12px;font-family:'Liberation Mono',monospace;color:#d8d8d8;white-space:pre">            showcases: old_config.showcases,</div>
<div class="t" style="right:1163px;top:525.88px;font-size:12px;font-family:'Liberation Mono',monospace;color:#7c7c7c">67</div>
<div class="t" style="right:1123px;top:525.88px;font-size:12px;font-family:'Liberation Mono',monospace;color:#7c7c7c">71</div>
<div class="t" style="left:1271px;top:525.88px;font-size:12px;font-family:'Liberation Mono',monospace;color:#d8d8d8;white-space:pre">            pr_auto_description_enabled: <span style="color:#7db9f5">true</span>,</div>
<div class="t" style="right:1163px;top:544.63px;font-size:12px;font-family:'Liberation Mono',monospace;color:#7c7c7c">68</div>
<div class="t" style="right:1123px;top:544.63px;font-size:12px;font-family:'Liberation Mono',monospace;color:#7c7c7c">72</div>
<div class="t" style="left:1271px;top:544.63px;font-size:12px;font-family:'Liberation Mono',monospace;color:#d8d8d8;white-space:pre">            pr_auto_description_prompt: <span style="color:#7db9f5">None</span>,</div>
<div class="a" style="left:1156px;top:559.0px;width:761px;height:18.75px;background:#2a432b;"></div>
<div class="t" style="right:1123px;top:563.38px;font-size:12px;font-family:'Liberation Mono',monospace;color:#9a9a9a">73</div>
<div class="t" style="left:1255px;top:563.38px;font-size:12px;font-family:'Liberation Mono',monospace;color:#d8d8d8;font-weight:bold">+</div>
<div class="t" style="left:1271px;top:563.38px;font-size:12px;font-family:'Liberation Mono',monospace;color:#d8d8d8;white-space:pre">            beta_workspaces: <span style="color:#7db9f5">false</span>,</div>
<div class="a" style="left:1156px;top:577.75px;width:761px;height:18.75px;background:#2a432b;"></div>
<div class="t" style="right:1123px;top:582.13px;font-size:12px;font-family:'Liberation Mono',monospace;color:#9a9a9a">74</div>
<div class="t" style="left:1255px;top:582.13px;font-size:12px;font-family:'Liberation Mono',monospace;color:#d8d8d8;font-weight:bold">+</div>
<div class="t" style="left:1271px;top:582.13px;font-size:12px;font-family:'Liberation Mono',monospace;color:#d8d8d8;white-space:pre">            beta_workspaces_invitation_sent: <span style="color:#7db9f5">false</span>,</div>
<div class="t" style="right:1163px;top:600.88px;font-size:12px;font-family:'Liberation Mono',monospace;color:#7c7c7c">69</div>
<div class="t" style="right:1123px;top:600.88px;font-size:12px;font-family:'Liberation Mono',monospace;color:#7c7c7c">75</div>
<div class="t" style="left:1271px;top:600.88px;font-size:12px;font-family:'Liberation Mono',monospace;color:#d8d8d8;white-space:pre">        }</div>
<div class="t" style="right:1163px;top:619.63px;font-size:12px;font-family:'Liberation Mono',monospace;color:#7c7c7c">70</div>
<div class="t" style="right:1123px;top:619.63px;font-size:12px;font-family:'Liberation Mono',monospace;color:#7c7c7c">76</div>
<div class="t" style="left:1271px;top:619.63px;font-size:12px;font-family:'Liberation Mono',monospace;color:#d8d8d8;white-space:pre">    }</div>
<div class="t" style="right:1163px;top:638.38px;font-size:12px;font-family:'Liberation Mono',monospace;color:#7c7c7c">71</div>
<div class="t" style="right:1123px;top:638.38px;font-size:12px;font-family:'Liberation Mono',monospace;color:#7c7c7c">77</div>
<div class="t" style="left:1271px;top:638.38px;font-size:12px;font-family:'Liberation Mono',monospace;color:#d8d8d8;white-space:pre"></div>
<div class="t" style="right:1163px;top:657.13px;font-size:12px;font-family:'Liberation Mono',monospace;color:#7c7c7c">72</div>
<div class="t" style="right:1123px;top:657.13px;font-size:12px;font-family:'Liberation Mono',monospace;color:#7c7c7c">78</div>
<div class="t" style="left:1271px;top:657.13px;font-size:12px;font-family:'Liberation Mono',monospace;color:#d8d8d8;white-space:pre">    <span style="color:#f28b75">pub</span> <span style="color:#f28b75">fn</span> <span style="color:#c9a2f7">from_previous_version</span>(raw_config: &amp;<span style="color:#f28b75">str</span>) -&gt; <span style="color:#f28b75">Result</span>&lt;<span style="color:#f28b75">Self</span>, Error&gt; {</div>
<div class="t" style="left:1265px;top:688.05px;font-size:12px;font-family:'Liberation Mono',monospace;color:#8a8a8a">@@ -115,7 +121,9 @@</div>
<div class="a" style="left:1194.2px;top:679.3px;width:1.6px;height:1.6px;background:#8a8a8a;"></div>
<div class="a" style="left:1197.2px;top:679.3px;width:1.6px;height:1.6px;background:#8a8a8a;"></div>
<div class="a" style="left:1200.2px;top:679.3px;width:1.6px;height:1.6px;background:#8a8a8a;"></div>
<div class="a" style="left:1203.2px;top:679.3px;width:1.6px;height:1.6px;background:#8a8a8a;"></div>
<div class="a" style="left:1206.2px;top:679.3px;width:1.6px;height:1.6px;background:#8a8a8a;"></div>
<svg style="left:1197px;top:683.0px;" width="8" height="8" viewBox="0 0 8 8" fill="none"><rect x="3" y="0" width="2" height="3.8" fill="#8a8a8a"/><path d="M4 7.4L7.6 3.6H0.4Z" fill="#8a8a8a"/></svg>
<svg style="left:1197px;top:697.0px;" width="8" height="8" viewBox="0 0 8 8" fill="none"><path d="M4 0L7.6 3.8H0.4Z" fill="#8a8a8a"/><rect x="3" y="3.6" width="2" height="3.6" fill="#8a8a8a"/></svg>
<div class="a" style="left:1194.2px;top:707.3px;width:1.6px;height:1.6px;background:#8a8a8a;"></div>
<div class="a" style="left:1197.2px;top:707.3px;width:1.6px;height:1.6px;background:#8a8a8a;"></div>
<div class="a" style="left:1200.2px;top:707.3px;width:1.6px;height:1.6px;background:#8a8a8a;"></div>
<div class="a" style="left:1203.2px;top:707.3px;width:1.6px;height:1.6px;background:#8a8a8a;"></div>
<div class="a" style="left:1206.2px;top:707.3px;width:1.6px;height:1.6px;background:#8a8a8a;"></div>
<div class="t" style="right:1163px;top:718.38px;font-size:12px;font-family:'Liberation Mono',monospace;color:#7c7c7c">115</div>
<div class="t" style="right:1123px;top:718.38px;font-size:12px;font-family:'Liberation Mono',monospace;color:#7c7c7c">121</div>
<div class="t" style="left:1271px;top:718.38px;font-size:12px;font-family:'Liberation Mono',monospace;color:#d8d8d8;white-space:pre">            git_branch_prefix: <span style="color:#c9a2f7">default_git_branch_prefix</span>(),</div>
<div class="t" style="right:1163px;top:737.13px;font-size:12px;font-family:'Liberation Mono',monospace;color:#7c7c7c">116</div>
<div class="t" style="right:1123px;top:737.13px;font-size:12px;font-family:'Liberation Mono',monospace;color:#7c7c7c">122</div>
<div class="t" style="left:1271px;top:737.13px;font-size:12px;font-family:'Liberation Mono',monospace;color:#d8d8d8;white-space:pre">            showcases: ShowcaseState::<span style="color:#c9a2f7">default</span>(),</div>
<div class="t" style="right:1163px;top:755.88px;font-size:12px;font-family:'Liberation Mono',monospace;color:#7c7c7c">117</div>
<div class="t" style="right:1123px;top:755.88px;font-size:12px;font-family:'Liberation Mono',monospace;color:#7c7c7c">123</div>
<div class="t" style="left:1271px;top:755.88px;font-size:12px;font-family:'Liberation Mono',monospace;color:#d8d8d8;white-space:pre">            pr_auto_description_enabled: <span style="color:#7db9f5">true</span>,</div>
<div class="t" style="right:1163px;top:774.63px;font-size:12px;font-family:'Liberation Mono',monospace;color:#7c7c7c">118</div>
<div class="t" style="right:1123px;top:774.63px;font-size:12px;font-family:'Liberation Mono',monospace;color:#7c7c7c">124</div>
<div class="t" style="left:1271px;top:774.63px;font-size:12px;font-family:'Liberation Mono',monospace;color:#d8d8d8;white-space:pre">            pr_auto_description_prompt: <span style="color:#7db9f5">None</span>,</div>
<div class="a" style="left:1156px;top:789.0px;width:761px;height:18.75px;background:#2a432b;"></div>
<div class="t" style="right:1123px;top:793.38px;font-size:12px;font-family:'Liberation Mono',monospace;color:#9a9a9a">125</div>
<div class="t" style="left:1255px;top:793.38px;font-size:12px;font-family:'Liberation Mono',monospace;color:#d8d8d8;font-weight:bold">+</div>
<div class="t" style="left:1271px;top:793.38px;font-size:12px;font-family:'Liberation Mono',monospace;color:#d8d8d8;white-space:pre">            beta_workspaces: <span style="color:#7db9f5">false</span>,</div>
<div class="a" style="left:1156px;top:807.75px;width:761px;height:18.75px;background:#2a432b;"></div>
<div class="t" style="right:1123px;top:812.13px;font-size:12px;font-family:'Liberation Mono',monospace;color:#9a9a9a">126</div>
<div class="t" style="left:1255px;top:812.13px;font-size:12px;font-family:'Liberation Mono',monospace;color:#d8d8d8;font-weight:bold">+</div>
<div class="t" style="left:1271px;top:812.13px;font-size:12px;font-family:'Liberation Mono',monospace;color:#d8d8d8;white-space:pre">            beta_workspaces_invitation_sent: <span style="color:#7db9f5">false</span>,</div>
<div class="t" style="right:1163px;top:830.88px;font-size:12px;font-family:'Liberation Mono',monospace;color:#7c7c7c">119</div>
<div class="t" style="right:1123px;top:830.88px;font-size:12px;font-family:'Liberation Mono',monospace;color:#7c7c7c">127</div>
<div class="t" style="left:1271px;top:830.88px;font-size:12px;font-family:'Liberation Mono',monospace;color:#d8d8d8;white-space:pre">        }</div>
<div class="t" style="right:1163px;top:849.63px;font-size:12px;font-family:'Liberation Mono',monospace;color:#7c7c7c">120</div>
<div class="t" style="right:1123px;top:849.63px;font-size:12px;font-family:'Liberation Mono',monospace;color:#7c7c7c">128</div>
<div class="t" style="left:1271px;top:849.63px;font-size:12px;font-family:'Liberation Mono',monospace;color:#d8d8d8;white-space:pre">    }</div>
<div class="t" style="right:1163px;top:868.38px;font-size:12px;font-family:'Liberation Mono',monospace;color:#7c7c7c">121</div>
<div class="t" style="right:1123px;top:868.38px;font-size:12px;font-family:'Liberation Mono',monospace;color:#7c7c7c">129</div>
<div class="t" style="left:1271px;top:868.38px;font-size:12px;font-family:'Liberation Mono',monospace;color:#d8d8d8;white-space:pre">}</div>
<div class="a" style="left:1155px;top:893px;width:763px;height:420px;background:#2a432b;border:1px solid #2e2e2e;border-radius:4px"></div>
<div class="a" style="left:1156px;top:894px;width:761px;height:41px;background:#1f1f1f;border-radius:3px 3px 0 0"></div>
<div class="a" style="left:1164px;top:904px;width:20px;height:20px;background:#3b7bd0;border-radius:1px"></div>
<div class="t" style="left:1164px;top:912.0px;width:18.5px;text-align:right;font-size:11.200000000000001px;font-weight:bold;color:#fff;letter-spacing:-0.2px">TS</div>
<div class="a" style="left:1192px;top:903px;width:51px;height:23px;border:1px solid #2f4a2f;border-radius:4px"></div>
<div class="t" style="left:1197px;top:907.73px;font-size:14.5px;color:#62b64d;">Added</div>
<div class="t" style="left:1250px;top:908.27px;font-size:14px;color:#d4d4d4;font-family:'Liberation Mono',monospace;">…/frontend/src/components/dialogs/global/BetaWorkspacesDialog.tsx</div>
<div class="t" style="left:1816px;top:906.80px;font-size:15px;color:#62b64d;">+63</div>
<svg style="left:1862px;top:906px;" width="16" height="16" viewBox="0 0 16 16" fill="none"><path d="M12.6 1.2L1.2 11.8M12.6 14.8L1.2 4.2" stroke="#fff" stroke-width="2.3" stroke-linecap="round"/><path d="M11.6 0.4L13.6 0.2L15.8 1.8V14.2L13.6 15.8L11.6 15.6Z" fill="#fff"/></svg>
<svg style="left:1896px;top:911px;" width="11" height="6" viewBox="0 0 11 6" fill="none"><path d="M0.5 0.5L5.5 5.5L10.5 0.5" stroke="#8a8a8a" stroke-width="1.2"/></svg>
<div class="a" style="left:1156px;top:935px;width:761px;height:18.75px;background:#2a432b;"></div>
<div class="t" style="right:1123px;top:939.38px;font-size:12px;font-family:'Liberation Mono',monospace;color:#9a9a9a">1</div>
<div class="t" style="left:1255px;top:939.38px;font-size:12px;font-family:'Liberation Mono',monospace;color:#d8d8d8;font-weight:bold">+</div>
<div class="t" style="left:1271px;top:939.38px;font-size:12px;font-family:'Liberation Mono',monospace;color:#d8d8d8;white-space:pre"><span style="color:#f28b75">import</span> {</div>
<div class="a" style="left:1156px;top:953.8px;width:761px;height:18.75px;background:#2a432b;"></div>
<div class="t" style="right:1123px;top:958.18px;font-size:12px;font-family:'Liberation Mono',monospace;color:#9a9a9a">2</div>
<div class="t" style="left:1255px;top:958.18px;font-size:12px;font-family:'Liberation Mono',monospace;color:#d8d8d8;font-weight:bold">+</div>
<div class="t" style="left:1271px;top:958.18px;font-size:12px;font-family:'Liberation Mono',monospace;color:#d8d8d8;white-space:pre">  <span style="color:#c9a2f7">Dialog</span>,</div>
<div class="a" style="left:1156px;top:972.5999999999999px;width:761px;height:18.75px;background:#2a432b;"></div>
<div class="t" style="right:1123px;top:976.98px;font-size:12px;font-family:'Liberation Mono',monospace;color:#9a9a9a">3</div>
<div class="t" style="left:1255px;top:976.98px;font-size:12px;font-family:'Liberation Mono',monospace;color:#d8d8d8;font-weight:bold">+</div>
<div class="t" style="left:1271px;top:976.98px;font-size:12px;font-family:'Liberation Mono',monospace;color:#d8d8d8;white-space:pre">  <span style="color:#c9a2f7">DialogContent</span>,</div>
<div class="a" style="left:1156px;top:991.3999999999999px;width:761px;height:18.75px;background:#2a432b;"></div>
<div class="t" style="right:1123px;top:995.78px;font-size:12px;font-family:'Liberation Mono',monospace;color:#9a9a9a">4</div>
<div class="t" style="left:1255px;top:995.78px;font-size:12px;font-family:'Liberation Mono',monospace;color:#d8d8d8;font-weight:bold">+</div>
<div class="t" style="left:1271px;top:995.78px;font-size:12px;font-family:'Liberation Mono',monospace;color:#d8d8d8;white-space:pre">  <span style="color:#c9a2f7">DialogFooter</span>,</div>
<div class="a" style="left:1156px;top:1010.1999999999998px;width:761px;height:18.75px;background:#2a432b;"></div>
<div class="t" style="right:1123px;top:1014.58px;font-size:12px;font-family:'Liberation Mono',monospace;color:#9a9a9a">5</div>
<div class="t" style="left:1255px;top:1014.58px;font-size:12px;font-family:'Liberation Mono',monospace;color:#d8d8d8;font-weight:bold">+</div>
<div class="t" style="left:1271px;top:1014.58px;font-size:12px;font-family:'Liberation Mono',monospace;color:#d8d8d8;white-space:pre">  <span style="color:#c9a2f7">DialogHeader</span>,</div>
<div class="a" style="left:1156px;top:1028.9999999999998px;width:761px;height:18.75px;background:#2a432b;"></div>
<div class="t" style="right:1123px;top:1033.38px;font-size:12px;font-family:'Liberation Mono',monospace;color:#9a9a9a">6</div>
<div class="t" style="left:1255px;top:1033.38px;font-size:12px;font-family:'Liberation Mono',monospace;color:#d8d8d8;font-weight:bold">+</div>
<div class="t" style="left:1271px;top:1033.38px;font-size:12px;font-family:'Liberation Mono',monospace;color:#d8d8d8;white-space:pre">  <span style="color:#c9a2f7">DialogTitle</span>,</div>
<div class="a" style="left:1156px;top:1047.7999999999997px;width:761px;height:18.75px;background:#2a432b;"></div>
<div class="t" style="right:1123px;top:1052.18px;font-size:12px;font-family:'Liberation Mono',monospace;color:#9a9a9a">7</div>
<div class="t" style="left:1255px;top:1052.18px;font-size:12px;font-family:'Liberation Mono',monospace;color:#d8d8d8;font-weight:bold">+</div>
<div class="t" style="left:1271px;top:1052.18px;font-size:12px;font-family:'Liberation Mono',monospace;color:#d8d8d8;white-space:pre">} <span style="color:#f28b75">from</span> <span style="color:#a9d5ff">'@/components/ui/dialog'</span>;</div>
<div class="a" style="left:1156px;top:1066.5999999999997px;width:761px;height:18.75px;background:#2a432b;"></div>
<div class="t" style="right:1123px;top:1070.98px;font-size:12px;font-family:'Liberation Mono',monospace;color:#9a9a9a">8</div>
<div class="t" style="left:1255px;top:1070.98px;font-size:12px;font-family:'Liberation Mono',monospace;color:#d8d8d8;font-weight:bold">+</div>
<div class="t" style="left:1271px;top:1070.98px;font-size:12px;font-family:'Liberation Mono',monospace;color:#d8d8d8;white-space:pre"><span style="color:#f28b75">import</span> { <span style="color:#c9a2f7">Button</span> } <span style="color:#f28b75">from</span> <span style="color:#a9d5ff">'@/components/ui/button'</span>;</div>
<div class="a" style="left:1156px;top:1085.3999999999996px;width:761px;height:18.75px;background:#2a432b;"></div>
<div class="t" style="right:1123px;top:1089.78px;font-size:12px;font-family:'Liberation Mono',monospace;color:#9a9a9a">9</div>
<div class="t" style="left:1255px;top:1089.78px;font-size:12px;font-family:'Liberation Mono',monospace;color:#d8d8d8;font-weight:bold">+</div>
<div class="t" style="left:1271px;top:1089.78px;font-size:12px;font-family:'Liberation Mono',monospace;color:#d8d8d8;white-space:pre"><span style="color:#f28b75">import</span> <span style="color:#c9a2f7">NiceModal</span>, { useModal } <span style="color:#f28b75">from</span> <span style="color:#a9d5ff">'@ebay/nice-modal-react'</span>;</div>
<div class="a" style="left:1156px;top:1104.1999999999996px;width:761px;height:18.75px;background:#2a432b;"></div>
<div class="t" style="right:1123px;top:1108.58px;font-size:12px;font-family:'Liberation Mono',monospace;color:#9a9a9a">10</div>
<div class="t" style="left:1255px;top:1108.58px;font-size:12px;font-family:'Liberation Mono',monospace;color:#d8d8d8;font-weight:bold">+</div>
<div class="t" style="left:1271px;top:1108.58px;font-size:12px;font-family:'Liberation Mono',monospace;color:#d8d8d8;white-space:pre"><span style="color:#f28b75">import</span> { defineModal, <span style="color:#f28b75">type</span> <span style="color:#c9a2f7">NoProps</span> } <span style="color:#f28b75">from</span> <span style="color:#a9d5ff">'@/lib/modals'</span>;</div>
<div class="a" style="left:1156px;top:1122.9999999999995px;width:761px;height:18.75px;background:#2a432b;"></div>
<div class="t" style="right:1123px;top:1127.38px;font-size:12px;font-family:'Liberation Mono',monospace;color:#9a9a9a">11</div>
<div class="t" style="left:1255px;top:1127.38px;font-size:12px;font-family:'Liberation Mono',monospace;color:#d8d8d8;font-weight:bold">+</div>
<div class="t" style="left:1271px;top:1127.38px;font-size:12px;font-family:'Liberation Mono',monospace;color:#d8d8d8;white-space:pre"><span style="color:#f28b75">import</span> { useTranslation } <span style="color:#f28b75">from</span> <span style="color:#a9d5ff">'react-i18next'</span>;</div>
<div class="a" style="left:1156px;top:1141.7999999999995px;width:761px;height:18.75px;background:#2a432b;"></div>
<div class="t" style="right:1123px;top:1146.18px;font-size:12px;font-family:'Liberation Mono',monospace;color:#9a9a9a">12</div>
<div class="t" style="left:1255px;top:1146.18px;font-size:12px;font-family:'Liberation Mono',monospace;color:#d8d8d8;font-weight:bold">+</div>
<div class="t" style="left:1271px;top:1146.18px;font-size:12px;font-family:'Liberation Mono',monospace;color:#d8d8d8;white-space:pre"></div>
<div class="a" style="left:1156px;top:1160.5999999999995px;width:761px;height:18.75px;background:#2a432b;"></div>
<div class="t" style="right:1123px;top:1164.98px;font-size:12px;font-family:'Liberation Mono',monospace;color:#9a9a9a">13</div>
<div class="t" style="left:1255px;top:1164.98px;font-size:12px;font-family:'Liberation Mono',monospace;color:#d8d8d8;font-weight:bold">+</div>
<div class="t" style="left:1271px;top:1164.98px;font-size:12px;font-family:'Liberation Mono',monospace;color:#d8d8d8;white-space:pre"><span style="color:#f28b75">const</span> <span style="color:#c9a2f7">BetaWorkspacesDialogImpl</span> = <span style="color:#c9a2f7">NiceModal</span>.create&lt;<span style="color:#c9a2f7">NoProps</span>&gt;(() =&gt; {</div>
<div class="a" style="left:1156px;top:1179.3999999999994px;width:761px;height:18.75px;background:#2a432b;"></div>
<div class="t" style="right:1123px;top:1183.78px;font-size:12px;font-family:'Liberation Mono',monospace;color:#9a9a9a">14</div>
<div class="t" style="left:1255px;top:1183.78px;font-size:12px;font-family:'Liberation Mono',monospace;color:#d8d8d8;font-weight:bold">+</div>
<div class="t" style="left:1271px;top:1183.78px;font-size:12px;font-family:'Liberation Mono',monospace;color:#d8d8d8;white-space:pre">  <span style="color:#f28b75">const</span> modal = <span style="color:#c9a2f7">useModal</span>();</div>
<div class="a" style="left:1156px;top:1198.1999999999994px;width:761px;height:18.75px;background:#2a432b;"></div>
<div class="t" style="right:1123px;top:1202.58px;font-size:12px;font-family:'Liberation Mono',monospace;color:#9a9a9a">15</div>
<div class="t" style="left:1255px;top:1202.58px;font-size:12px;font-family:'Liberation Mono',monospace;color:#d8d8d8;font-weight:bold">+</div>
<div class="t" style="left:1271px;top:1202.58px;font-size:12px;font-family:'Liberation Mono',monospace;color:#d8d8d8;white-space:pre">  <span style="color:#f28b75">const</span> { t } = <span style="color:#c9a2f7">useTranslation</span>(<span style="color:#a9d5ff">'common'</span>);</div>
<div class="a" style="left:1156px;top:1216.9999999999993px;width:761px;height:18.75px;background:#2a432b;"></div>
<div class="t" style="right:1123px;top:1221.38px;font-size:12px;font-family:'Liberation Mono',monospace;color:#9a9a9a">16</div>
<div class="t" style="left:1255px;top:1221.38px;font-size:12px;font-family:'Liberation Mono',monospace;color:#d8d8d8;font-weight:bold">+</div>
<div class="t" style="left:1271px;top:1221.38px;font-size:12px;font-family:'Liberation Mono',monospace;color:#d8d8d8;white-space:pre"></div>
<div class="a" style="left:1156px;top:1235.7999999999993px;width:761px;height:18.75px;background:#2a432b;"></div>
<div class="t" style="right:1123px;top:1240.18px;font-size:12px;font-family:'Liberation Mono',monospace;color:#9a9a9a">17</div>
<div class="t" style="left:1255px;top:1240.18px;font-size:12px;font-family:'Liberation Mono',monospace;color:#d8d8d8;font-weight:bold">+</div>
<div class="t" style="left:1271px;top:1240.18px;font-size:12px;font-family:'Liberation Mono',monospace;color:#d8d8d8;white-space:pre">  <span style="color:#f28b75">const</span> <span style="color:#c9a2f7">handleJoinBeta</span> = () =&gt; {</div>
<div class="a" style="left:1156px;top:1254.5999999999992px;width:761px;height:18.75px;background:#2a432b;"></div>
<div class="t" style="right:1123px;top:1258.98px;font-size:12px;font-family:'Liberation Mono',monospace;color:#9a9a9a">18</div>
<div class="t" style="left:1255px;top:1258.98px;font-size:12px;font-family:'Liberation Mono',monospace;color:#d8d8d8;font-weight:bold">+</div>
<div class="t" style="left:1271px;top:1258.98px;font-size:12px;font-family:'Liberation Mono',monospace;color:#d8d8d8;white-space:pre">    modal.<span style="color:#c9a2f7">resolve</span>(<span style="color:#7db9f5">true</span>);</div>
<div class="a" style="left:1156px;top:1273.3999999999992px;width:761px;height:18.75px;background:#2a432b;"></div>
<div class="t" style="right:1123px;top:1277.78px;font-size:12px;font-family:'Liberation Mono',monospace;color:#9a9a9a">19</div>
<div class="t" style="left:1255px;top:1277.78px;font-size:12px;font-family:'Liberation Mono',monospace;color:#d8d8d8;font-weight:bold">+</div>
<div class="t" style="left:1271px;top:1277.78px;font-size:12px;font-family:'Liberation Mono',monospace;color:#d8d8d8;white-space:pre">  };</div>
<div class="a" style="left:1927px;top:158px;width:7px;height:32px;background:#9a9a9a;"></div>
<div class="t" style="left:1942px;top:167.30px;font-size:15px;color:#e0e0e0;font-weight:bold;">Changes</div>
<svg style="left:2281px;top:171px;" width="12" height="7" viewBox="0 0 12 7" fill="none"><path d="M0.5 0.5H11.5L6 6.5Z" fill="#9a9a9a"/></svg>
<div class="a" style="left:1934px;top:190px;width:369px;height:1px;background:#2e2e2e;"></div>
<div class="a" style="left:1934px;top:199px;width:332px;height:34px;border:1px solid #333;border-radius:4px"></div>
<div class="t" style="left:1943.6px;top:208.96px;font-size:15.4px;color:#858585;">Search files...</div>
<svg style="left:2241px;top:208px;" width="14" height="14" viewBox="0 0 14 14" fill="none"><path d="M12.5 1.5L7.8 6.2M7.3 2.5V6.7H11.5M1.5 12.5L5.8 8.2M2.5 7.7H6.3V11.5" stroke="#9a9a9a" stroke-width="1.5"/></svg>
<svg style="left:2273px;top:208px;" width="17" height="16" viewBox="0 0 17 16" fill="none"><path d="M4.5 0.5L7 3H11L13.5 0.5L15.2 2.5V7.5C15.2 9.8 13.8 11 12.3 11.5V15.5H6.3V11.5C4.8 11 3.8 9.8 3.8 7.5V2.5Z" fill="#c8c8c8"/><path d="M0.5 10C1.5 11 2 12.5 3.5 13.2C4.5 13.6 5.5 13.4 6.3 13" stroke="#c8c8c8" stroke-width="1.3" fill="none"/></svg>
<div class="a" style="left:1945.5px;top:267px;width:1px;height:678px;background:#353535;"></div>
<div class="a" style="left:1957.5px;top:293px;width:1px;height:416px;background:#353535;"></div>
<div class="a" style="left:1969.5px;top:319px;width:1px;height:130px;background:#353535;"></div>
<div class="a" style="left:1981.5px;top:345px;width:1px;height:26px;background:#353535;"></div>
<div class="a" style="left:1981.5px;top:397px;width:1px;height:52px;background:#353535;"></div>
<div class="a" style="left:1993.5px;top:423px;width:1px;height:26px;background:#353535;"></div>
<div class="a" style="left:1969.5px;top:475px;width:1px;height:78px;background:#353535;"></div>
<div class="a" style="left:1981.5px;top:501px;width:1px;height:52px;background:#353535;"></div>
<div class="a" style="left:1993.5px;top:527px;width:1px;height:26px;background:#353535;"></div>
<div class="a" style="left:1969.5px;top:579px;width:1px;height:130px;background:#353535;"></div>
<div class="a" style="left:1981.5px;top:605px;width:1px;height:104px;background:#353535;"></div>
<div class="a" style="left:1993.5px;top:631px;width:1px;height:78px;background:#353535;"></div>
<div class="a" style="left:2005.5px;top:657px;width:1px;height:52px;background:#353535;"></div>
<div class="a" style="left:2017.5px;top:683px;width:1px;height:26px;background:#353535;"></div>
<div class="a" style="left:1957.5px;top:735px;width:1px;height:210px;background:#353535;"></div>
<div class="a" style="left:1969.5px;top:761px;width:1px;height:184px;background:#353535;"></div>
<div class="a" style="left:1981.5px;top:787px;width:1px;height:130px;background:#353535;"></div>
<div class="a" style="left:1993.5px;top:813px;width:1px;height:52px;background:#353535;"></div>
<div class="a" style="left:2005.5px;top:839px;width:1px;height:26px;background:#353535;"></div>
<div class="a" style="left:1993.5px;top:891px;width:1px;height:26px;background:#353535;"></div>
<div class="a" style="left:1927px;top:945px;width:376px;height:340px;background:#1c1c1c"></div>
<svg style="left:1941.5px;top:251.5px;" width="9" height="5" viewBox="0 0 9 5" fill="none"><path d="M0.3 0.3H8.7L4.5 4.7Z" fill="#9a9a9a"/></svg>
<svg style="left:1958px;top:248px;" width="15" height="12" viewBox="0 0 15 12" fill="none"><path d="M0 1A1 1 0 0 1 1 0H5.5L7 1.8H14A1 1 0 0 1 15 2.8V11A1 1 0 0 1 14 12H1A1 1 0 0 1 0 11Z" fill="#8e8e8e"/></svg>
<div class="t" style="left:1977.5px;top:247.15px;font-size:14px;color:#a8a8a8;">vibe-kanban</div>
<svg style="left:1953.5px;top:277.5px;" width="9" height="5" viewBox="0 0 9 5" fill="none"><path d="M0.3 0.3H8.7L4.5 4.7Z" fill="#9a9a9a"/></svg>
<svg style="left:1970px;top:274px;" width="15" height="12" viewBox="0 0 15 12" fill="none"><path d="M0 1A1 1 0 0 1 1 0H5.5L7 1.8H14A1 1 0 0 1 15 2.8V11A1 1 0 0 1 14 12H1A1 1 0 0 1 0 11Z" fill="#8e8e8e"/></svg>
<div class="t" style="left:1989.5px;top:273.15px;font-size:14px;color:#a8a8a8;">crates</div>
<svg style="left:1965.5px;top:303.5px;" width="9" height="5" viewBox="0 0 9 5" fill="none"><path d="M0.3 0.3H8.7L4.5 4.7Z" fill="#9a9a9a"/></svg>
<svg style="left:1982px;top:300px;" width="15" height="12" viewBox="0 0 15 12" fill="none"><path d="M0 1A1 1 0 0 1 1 0H5.5L7 1.8H14A1 1 0 0 1 15 2.8V11A1 1 0 0 1 14 12H1A1 1 0 0 1 0 11Z" fill="#8e8e8e"/></svg>
<div class="t" style="left:2001.5px;top:299.15px;font-size:14px;color:#a8a8a8;">db</div>
<svg style="left:1977.5px;top:329.5px;" width="9" height="5" viewBox="0 0 9 5" fill="none"><path d="M0.3 0.3H8.7L4.5 4.7Z" fill="#9a9a9a"/></svg>
<svg style="left:1994px;top:326px;" width="15" height="12" viewBox="0 0 15 12" fill="none"><path d="M0 1A1 1 0 0 1 1 0H5.5L7 1.8H14A1 1 0 0 1 15 2.8V11A1 1 0 0 1 14 12H1A1 1 0 0 1 0 11Z" fill="#8e8e8e"/></svg>
<div class="t" style="left:2013.5px;top:325.15px;font-size:14px;color:#a8a8a8;">.sqlx</div>
<svg style="left:2002px;top:350px;" width="14" height="15" viewBox="0 0 14 15" fill="none"><defs><linearGradient id="qg" x1="0" y1="0" x2="1" y2="1"><stop offset="0" stop-color="#555"/><stop offset="0.5" stop-color="#e8e8e8"/><stop offset="1" stop-color="#777"/></linearGradient></defs><ellipse cx="7" cy="7.5" rx="4.6" ry="6.3" transform="rotate(30 7 7.5)" stroke="url(#qg)" stroke-width="3.2" fill="none"/><ellipse cx="7" cy="7.5" rx="1.6" ry="3" transform="rotate(10 7 7.5)" fill="#111"/></svg>
<div class="t" style="left:2020px;top:351.15px;font-size:14px;color:#62b64d;">query-70b21c5c0a2ba5c21c9c1132f14a68d</div>
<svg style="left:1977.5px;top:381.5px;" width="9" height="5" viewBox="0 0 9 5" fill="none"><path d="M0.3 0.3H8.7L4.5 4.7Z" fill="#9a9a9a"/></svg>
<svg style="left:1994px;top:378px;" width="15" height="12" viewBox="0 0 15 12" fill="none"><path d="M0 1A1 1 0 0 1 1 0H5.5L7 1.8H14A1 1 0 0 1 15 2.8V11A1 1 0 0 1 14 12H1A1 1 0 0 1 0 11Z" fill="#8e8e8e"/></svg>
<div class="t" style="left:2013.5px;top:377.15px;font-size:14px;color:#a8a8a8;">src</div>
<svg style="left:1989.5px;top:407.5px;" width="9" height="5" viewBox="0 0 9 5" fill="none"><path d="M0.3 0.3H8.7L4.5 4.7Z" fill="#9a9a9a"/></svg>
<svg style="left:2006px;top:404px;" width="15" height="12" viewBox="0 0 15 12" fill="none"><path d="M0 1A1 1 0 0 1 1 0H5.5L7 1.8H14A1 1 0 0 1 15 2.8V11A1 1 0 0 1 14 12H1A1 1 0 0 1 0 11Z" fill="#8e8e8e"/></svg>
<div class="t" style="left:2025.5px;top:403.15px;font-size:14px;color:#a8a8a8;">models</div>
<svg style="left:2015px;top:429px;" width="14" height="14" viewBox="0 0 14 14" fill="none"><g transform="scale(0.7)"><circle cx="10" cy="10" r="8.6" fill="#fff"/><circle cx="19.20" cy="10.00" r="0.9" fill="#fff"/><circle cx="19.02" cy="11.79" r="0.9" fill="#fff"/><circle cx="18.50" cy="13.52" r="0.9" fill="#fff"/><circle cx="17.65" cy="15.11" r="0.9" fill="#fff"/><circle cx="16.51" cy="16.51" r="0.9" fill="#fff"/><circle cx="15.11" cy="17.65" r="0.9" fill="#fff"/><circle cx="13.52" cy="18.50" r="0.9" fill="#fff"/><circle cx="11.79" cy="19.02" r="0.9" fill="#fff"/><circle cx="10.00" cy="19.20" r="0.9" fill="#fff"/><circle cx="8.21" cy="19.02" r="0.9" fill="#fff"/><circle cx="6.48" cy="18.50" r="0.9" fill="#fff"/><circle cx="4.89" cy="17.65" r="0.9" fill="#fff"/><circle cx="3.49" cy="16.51" r="0.9" fill="#fff"/><circle cx="2.35" cy="15.11" r="0.9" fill="#fff"/><circle cx="1.50" cy="13.52" r="0.9" fill="#fff"/><circle cx="0.98" cy="11.79" r="0.9" fill="#fff"/><circle cx="0.80" cy="10.00" r="0.9" fill="#fff"/><circle cx="0.98" cy="8.21" r="0.9" fill="#fff"/><circle cx="1.50" cy="6.48" r="0.9" fill="#fff"/><circle cx="2.35" cy="4.89" r="0.9" fill="#fff"/><circle cx="3.49" cy="3.49" r="0.9" fill="#fff"/><circle cx="4.89" cy="2.35" r="0.9" fill="#fff"/><circle cx="6.48" cy="1.50" r="0.9" fill="#fff"/><circle cx="8.21" cy="0.98" r="0.9" fill="#fff"/><circle cx="10.00" cy="0.80" r="0.9" fill="#fff"/><circle cx="11.79" cy="0.98" r="0.9" fill="#fff"/><circle cx="13.52" cy="1.50" r="0.9" fill="#fff"/><circle cx="15.11" cy="2.35" r="0.9" fill="#fff"/><circle cx="16.51" cy="3.49" r="0.9" fill="#fff"/><circle cx="17.65" cy="4.89" r="0.9" fill="#fff"/><circle cx="18.50" cy="6.48" r="0.9" fill="#fff"/><circle cx="19.02" cy="8.21" r="0.9" fill="#fff"/><path d="M5.2 6.2H11.6C13.4 6.2 14.4 7.1 14.4 8.6C14.4 9.8 13.7 10.5 12.7 10.8L14.8 13.8H12.5L10.8 11.2H8.5V13.8H6.5V7.7H5.2Z M8.5 7.8V9.7H11.3C12 9.7 12.4 9.3 12.4 8.75C12.4 8.2 12 7.8 11.3 7.8Z" fill="#111" fill-rule="evenodd"/><path d="M4.8 14H9.3M3.2 9.5L4.8 8.2V11.5Z M15.2 8.5L16.8 9.6L15.2 10.8Z" fill="#111" stroke="#111" stroke-width="0.9"/><path d="M6 4.5Q10 2.6 14 4.5" stroke="#111" stroke-width="1.3" fill="none"/></g></svg>
<div class="t" style="left:2032px;top:429.15px;font-size:14px;color:#b8b8b8;">workspace.rs&nbsp;&nbsp;&nbsp;<span style="color:#62b64d">+8</span></div>
<svg style="left:1965.5px;top:459.5px;" width="9" height="5" viewBox="0 0 9 5" fill="none"><path d="M0.3 0.3H8.7L4.5 4.7Z" fill="#9a9a9a"/></svg>
<svg style="left:1982px;top:456px;" width="15" height="12" viewBox="0 0 15 12" fill="none"><path d="M0 1A1 1 0 0 1 1 0H5.5L7 1.8H14A1 1 0 0 1 15 2.8V11A1 1 0 0 1 14 12H1A1 1 0 0 1 0 11Z" fill="#8e8e8e"/></svg>
<div class="t" style="left:2001.5px;top:455.15px;font-size:14px;color:#a8a8a8;">server</div>
<svg style="left:1977.5px;top:485.5px;" width="9" height="5" viewBox="0 0 9 5" fill="none"><path d="M0.3 0.3H8.7L4.5 4.7Z" fill="#9a9a9a"/></svg>
<svg style="left:1994px;top:482px;" width="15" height="12" viewBox="0 0 15 12" fill="none"><path d="M0 1A1 1 0 0 1 1 0H5.5L7 1.8H14A1 1 0 0 1 15 2.8V11A1 1 0 0 1 14 12H1A1 1 0 0 1 0 11Z" fill="#8e8e8e"/></svg>
<div class="t" style="left:2013.5px;top:481.15px;font-size:14px;color:#a8a8a8;">src</div>
<svg style="left:1989.5px;top:511.5px;" width="9" height="5" viewBox="0 0 9 5" fill="none"><path d="M0.3 0.3H8.7L4.5 4.7Z" fill="#9a9a9a"/></svg>
<svg style="left:2006px;top:508px;" width="15" height="12" viewBox="0 0 15 12" fill="none"><path d="M0 1A1 1 0 0 1 1 0H5.5L7 1.8H14A1 1 0 0 1 15 2.8V11A1 1 0 0 1 14 12H1A1 1 0 0 1 0 11Z" fill="#8e8e8e"/></svg>
<div class="t" style="left:2025.5px;top:507.15px;font-size:14px;color:#a8a8a8;">routes</div>
<svg style="left:2015px;top:533px;" width="14" height="14" viewBox="0 0 14 14" fill="none"><g transform="scale(0.7)"><circle cx="10" cy="10" r="8.6" fill="#fff"/><circle cx="19.20" cy="10.00" r="0.9" fill="#fff"/><circle cx="19.02" cy="11.79" r="0.9" fill="#fff"/><circle cx="18.50" cy="13.52" r="0.9" fill="#fff"/><circle cx="17.65" cy="15.11" r="0.9" fill="#fff"/><circle cx="16.51" cy="16.51" r="0.9" fill="#fff"/><circle cx="15.11" cy="17.65" r="0.9" fill="#fff"/><circle cx="13.52" cy="18.50" r="0.9" fill="#fff"/><circle cx="11.79" cy="19.02" r="0.9" fill="#fff"/><circle cx="10.00" cy="19.20" r="0.9" fill="#fff"/><circle cx="8.21" cy="19.02" r="0.9" fill="#fff"/><circle cx="6.48" cy="18.50" r="0.9" fill="#fff"/><circle cx="4.89" cy="17.65" r="0.9" fill="#fff"/><circle cx="3.49" cy="16.51" r="0.9" fill="#fff"/><circle cx="2.35" cy="15.11" r="0.9" fill="#fff"/><circle cx="1.50" cy="13.52" r="0.9" fill="#fff"/><circle cx="0.98" cy="11.79" r="0.9" fill="#fff"/><circle cx="0.80" cy="10.00" r="0.9" fill="#fff"/><circle cx="0.98" cy="8.21" r="0.9" fill="#fff"/><circle cx="1.50" cy="6.48" r="0.9" fill="#fff"/><circle cx="2.35" cy="4.89" r="0.9" fill="#fff"/><circle cx="3.49" cy="3.49" r="0.9" fill="#fff"/><circle cx="4.89" cy="2.35" r="0.9" fill="#fff"/><circle cx="6.48" cy="1.50" r="0.9" fill="#fff"/><circle cx="8.21" cy="0.98" r="0.9" fill="#fff"/><circle cx="10.00" cy="0.80" r="0.9" fill="#fff"/><circle cx="11.79" cy="0.98" r="0.9" fill="#fff"/><circle cx="13.52" cy="1.50" r="0.9" fill="#fff"/><circle cx="15.11" cy="2.35" r="0.9" fill="#fff"/><circle cx="16.51" cy="3.49" r="0.9" fill="#fff"/><circle cx="17.65" cy="4.89" r="0.9" fill="#fff"/><circle cx="18.50" cy="6.48" r="0.9" fill="#fff"/><circle cx="19.02" cy="8.21" r="0.9" fill="#fff"/><path d="M5.2 6.2H11.6C13.4 6.2 14.4 7.1 14.4 8.6C14.4 9.8 13.7 10.5 12.7 10.8L14.8 13.8H12.5L10.8 11.2H8.5V13.8H6.5V7.7H5.2Z M8.5 7.8V9.7H11.3C12 9.7 12.4 9.3 12.4 8.75C12.4 8.2 12 7.8 11.3 7.8Z" fill="#111" fill-rule="evenodd"/><path d="M4.8 14H9.3M3.2 9.5L4.8 8.2V11.5Z M15.2 8.5L16.8 9.6L15.2 10.8Z" fill="#111" stroke="#111" stroke-width="0.9"/><path d="M6 4.5Q10 2.6 14 4.5" stroke="#111" stroke-width="1.3" fill="none"/></g></svg>
<div class="t" style="left:2032px;top:533.15px;font-size:14px;color:#b8b8b8;">task_attempts.rs&nbsp;&nbsp;&nbsp;<span style="color:#62b64d">+9</span></div>
<svg style="left:1965.5px;top:563.5px;" width="9" height="5" viewBox="0 0 9 5" fill="none"><path d="M0.3 0.3H8.7L4.5 4.7Z" fill="#9a9a9a"/></svg>
<svg style="left:1982px;top:560px;" width="15" height="12" viewBox="0 0 15 12" fill="none"><path d="M0 1A1 1 0 0 1 1 0H5.5L7 1.8H14A1 1 0 0 1 15 2.8V11A1 1 0 0 1 14 12H1A1 1 0 0 1 0 11Z" fill="#8e8e8e"/></svg>
<div class="t" style="left:2001.5px;top:559.15px;font-size:14px;color:#a8a8a8;">services</div>
<svg style="left:1977.5px;top:589.5px;" width="9" height="5" viewBox="0 0 9 5" fill="none"><path d="M0.3 0.3H8.7L4.5 4.7Z" fill="#9a9a9a"/></svg>
<svg style="left:1994px;top:586px;" width="15" height="12" viewBox="0 0 15 12" fill="none"><path d="M0 1A1 1 0 0 1 1 0H5.5L7 1.8H14A1 1 0 0 1 15 2.8V11A1 1 0 0 1 14 12H1A1 1 0 0 1 0 11Z" fill="#8e8e8e"/></svg>
<div class="t" style="left:2013.5px;top:585.15px;font-size:14px;color:#a8a8a8;">src</div>
<svg style="left:1989.5px;top:615.5px;" width="9" height="5" viewBox="0 0 9 5" fill="none"><path d="M0.3 0.3H8.7L4.5 4.7Z" fill="#9a9a9a"/></svg>
<svg style="left:2006px;top:612px;" width="15" height="12" viewBox="0 0 15 12" fill="none"><path d="M0 1A1 1 0 0 1 1 0H5.5L7 1.8H14A1 1 0 0 1 15 2.8V11A1 1 0 0 1 14 12H1A1 1 0 0 1 0 11Z" fill="#8e8e8e"/></svg>
<div class="t" style="left:2025.5px;top:611.15px;font-size:14px;color:#a8a8a8;">services</div>
<svg style="left:2001.5px;top:641.5px;" width="9" height="5" viewBox="0 0 9 5" fill="none"><path d="M0.3 0.3H8.7L4.5 4.7Z" fill="#9a9a9a"/></svg>
<svg style="left:2018px;top:638px;" width="15" height="12" viewBox="0 0 15 12" fill="none"><path d="M0 1A1 1 0 0 1 1 0H5.5L7 1.8H14A1 1 0 0 1 15 2.8V11A1 1 0 0 1 14 12H1A1 1 0 0 1 0 11Z" fill="#8e8e8e"/></svg>
<div class="t" style="left:2037.5px;top:637.15px;font-size:14px;color:#a8a8a8;">config</div>
<svg style="left:2013.5px;top:667.5px;" width="9" height="5" viewBox="0 0 9 5" fill="none"><path d="M0.3 0.3H8.7L4.5 4.7Z" fill="#9a9a9a"/></svg>
<svg style="left:2030px;top:664px;" width="15" height="12" viewBox="0 0 15 12" fill="none"><path d="M0 1A1 1 0 0 1 1 0H5.5L7 1.8H14A1 1 0 0 1 15 2.8V11A1 1 0 0 1 14 12H1A1 1 0 0 1 0 11Z" fill="#8e8e8e"/></svg>
<div class="t" style="left:2049.5px;top:663.15px;font-size:14px;color:#a8a8a8;">versions</div>
<svg style="left:2039px;top:689px;" width="14" height="14" viewBox="0 0 14 14" fill="none"><g transform="scale(0.7)"><circle cx="10" cy="10" r="8.6" fill="#fff"/><circle cx="19.20" cy="10.00" r="0.9" fill="#fff"/><circle cx="19.02" cy="11.79" r="0.9" fill="#fff"/><circle cx="18.50" cy="13.52" r="0.9" fill="#fff"/><circle cx="17.65" cy="15.11" r="0.9" fill="#fff"/><circle cx="16.51" cy="16.51" r="0.9" fill="#fff"/><circle cx="15.11" cy="17.65" r="0.9" fill="#fff"/><circle cx="13.52" cy="18.50" r="0.9" fill="#fff"/><circle cx="11.79" cy="19.02" r="0.9" fill="#fff"/><circle cx="10.00" cy="19.20" r="0.9" fill="#fff"/><circle cx="8.21" cy="19.02" r="0.9" fill="#fff"/><circle cx="6.48" cy="18.50" r="0.9" fill="#fff"/><circle cx="4.89" cy="17.65" r="0.9" fill="#fff"/><circle cx="3.49" cy="16.51" r="0.9" fill="#fff"/><circle cx="2.35" cy="15.11" r="0.9" fill="#fff"/><circle cx="1.50" cy="13.52" r="0.9" fill="#fff"/><circle cx="0.98" cy="11.79" r="0.9" fill="#fff"/><circle cx="0.80" cy="10.00" r="0.9" fill="#fff"/><circle cx="0.98" cy="8.21" r="0.9" fill="#fff"/><circle cx="1.50" cy="6.48" r="0.9" fill="#fff"/><circle cx="2.35" cy="4.89" r="0.9" fill="#fff"/><circle cx="3.49" cy="3.49" r="0.9" fill="#fff"/><circle cx="4.89" cy="2.35" r="0.9" fill="#fff"/><circle cx="6.48" cy="1.50" r="0.9" fill="#fff"/><circle cx="8.21" cy="0.98" r="0.9" fill="#fff"/><circle cx="10.00" cy="0.80" r="0.9" fill="#fff"/><circle cx="11.79" cy="0.98" r="0.9" fill="#fff"/><circle cx="13.52" cy="1.50" r="0.9" fill="#fff"/><circle cx="15.11" cy="2.35" r="0.9" fill="#fff"/><circle cx="16.51" cy="3.49" r="0.9" fill="#fff"/><circle cx="17.65" cy="4.89" r="0.9" fill="#fff"/><circle cx="18.50" cy="6.48" r="0.9" fill="#fff"/><circle cx="19.02" cy="8.21" r="0.9" fill="#fff"/><path d="M5.2 6.2H11.6C13.4 6.2 14.4 7.1 14.4 8.6C14.4 9.8 13.7 10.5 12.7 10.8L14.8 13.8H12.5L10.8 11.2H8.5V13.8H6.5V7.7H5.2Z M8.5 7.8V9.7H11.3C12 9.7 12.4 9.3 12.4 8.75C12.4 8.2 12 7.8 11.3 7.8Z" fill="#111" fill-rule="evenodd"/><path d="M4.8 14H9.3M3.2 9.5L4.8 8.2V11.5Z M15.2 8.5L16.8 9.6L15.2 10.8Z" fill="#111" stroke="#111" stroke-width="0.9"/><path d="M6 4.5Q10 2.6 14 4.5" stroke="#111" stroke-width="1.3" fill="none"/></g></svg>
<div class="t" style="left:2056px;top:689.15px;font-size:14px;color:#b8b8b8;">v8.rs&nbsp;&nbsp;&nbsp;<span style="color:#62b64d">+8</span></div>
<svg style="left:1953.5px;top:719.5px;" width="9" height="5" viewBox="0 0 9 5" fill="none"><path d="M0.3 0.3H8.7L4.5 4.7Z" fill="#9a9a9a"/></svg>
<svg style="left:1970px;top:716px;" width="15" height="12" viewBox="0 0 15 12" fill="none"><path d="M0 1A1 1 0 0 1 1 0H5.5L7 1.8H14A1 1 0 0 1 15 2.8V11A1 1 0 0 1 14 12H1A1 1 0 0 1 0 11Z" fill="#8e8e8e"/></svg>
<div class="t" style="left:1989.5px;top:715.15px;font-size:14px;color:#a8a8a8;">frontend</div>
<svg style="left:1965.5px;top:745.5px;" width="9" height="5" viewBox="0 0 9 5" fill="none"><path d="M0.3 0.3H8.7L4.5 4.7Z" fill="#9a9a9a"/></svg>
<svg style="left:1982px;top:742px;" width="15" height="12" viewBox="0 0 15 12" fill="none"><path d="M0 1A1 1 0 0 1 1 0H5.5L7 1.8H14A1 1 0 0 1 15 2.8V11A1 1 0 0 1 14 12H1A1 1 0 0 1 0 11Z" fill="#8e8e8e"/></svg>
<div class="t" style="left:2001.5px;top:741.15px;font-size:14px;color:#a8a8a8;">src</div>
<svg style="left:1977.5px;top:771.5px;" width="9" height="5" viewBox="0 0 9 5" fill="none"><path d="M0.3 0.3H8.7L4.5 4.7Z" fill="#9a9a9a"/></svg>
<svg style="left:1994px;top:768px;" width="15" height="12" viewBox="0 0 15 12" fill="none"><path d="M0 1A1 1 0 0 1 1 0H5.5L7 1.8H14A1 1 0 0 1 15 2.8V11A1 1 0 0 1 14 12H1A1 1 0 0 1 0 11Z" fill="#8e8e8e"/></svg>
<div class="t" style="left:2013.5px;top:767.15px;font-size:14px;color:#a8a8a8;">components</div>
<svg style="left:1989.5px;top:797.5px;" width="9" height="5" viewBox="0 0 9 5" fill="none"><path d="M0.3 0.3H8.7L4.5 4.7Z" fill="#9a9a9a"/></svg>
<svg style="left:2006px;top:794px;" width="15" height="12" viewBox="0 0 15 12" fill="none"><path d="M0 1A1 1 0 0 1 1 0H5.5L7 1.8H14A1 1 0 0 1 15 2.8V11A1 1 0 0 1 14 12H1A1 1 0 0 1 0 11Z" fill="#8e8e8e"/></svg>
<div class="t" style="left:2025.5px;top:793.15px;font-size:14px;color:#a8a8a8;">dialogs</div>
<svg style="left:2001.5px;top:823.5px;" width="9" height="5" viewBox="0 0 9 5" fill="none"><path d="M0.3 0.3H8.7L4.5 4.7Z" fill="#9a9a9a"/></svg>
<svg style="left:2018px;top:820px;" width="15" height="12" viewBox="0 0 15 12" fill="none"><path d="M0 1A1 1 0 0 1 1 0H5.5L7 1.8H14A1 1 0 0 1 15 2.8V11A1 1 0 0 1 14 12H1A1 1 0 0 1 0 11Z" fill="#8e8e8e"/></svg>
<div class="t" style="left:2037.5px;top:819.15px;font-size:14px;color:#a8a8a8;">global</div>
<div class="a" style="left:2028px;top:845px;width:14px;height:14px;background:#3b7bd0;border-radius:1px"></div>
<div class="t" style="left:2028px;top:850.6px;width:12.5px;text-align:right;font-size:7.840000000000001px;font-weight:bold;color:#fff;letter-spacing:-0.2px">TS</div>
<div class="t" style="left:2044px;top:845.15px;font-size:14px;color:#62b64d;">BetaWorkspacesDialog.tsx&nbsp;&nbsp;&nbsp;<span style="color:#62b64d">+63</span></div>
<svg style="left:1989.5px;top:875.5px;" width="9" height="5" viewBox="0 0 9 5" fill="none"><path d="M0.3 0.3H8.7L4.5 4.7Z" fill="#9a9a9a"/></svg>
<svg style="left:2006px;top:872px;" width="15" height="12" viewBox="0 0 15 12" fill="none"><path d="M0 1A1 1 0 0 1 1 0H5.5L7 1.8H14A1 1 0 0 1 15 2.8V11A1 1 0 0 1 14 12H1A1 1 0 0 1 0 11Z" fill="#8e8e8e"/></svg>
<div class="t" style="left:2025.5px;top:871.15px;font-size:14px;color:#a8a8a8;">panels</div>
<div class="a" style="left:2016px;top:897px;width:14px;height:14px;background:#3b7bd0;border-radius:1px"></div>
<div class="t" style="left:2016px;top:902.6px;width:12.5px;text-align:right;font-size:7.840000000000001px;font-weight:bold;color:#fff;letter-spacing:-0.2px">TS</div>
<div class="t" style="left:2032px;top:897.15px;font-size:14px;color:#b8b8b8;">TaskPanel.tsx&nbsp;&nbsp;&nbsp;<span style="color:#62b64d">+8</span> <span style="color:#d95a52">-2</span></div>
<svg style="left:1977.5px;top:927.5px;" width="9" height="5" viewBox="0 0 9 5" fill="none"><path d="M0.3 0.3H8.7L4.5 4.7Z" fill="#9a9a9a"/></svg>
<svg style="left:1994px;top:924px;" width="15" height="12" viewBox="0 0 15 12" fill="none"><path d="M0 1A1 1 0 0 1 1 0H5.5L7 1.8H14A1 1 0 0 1 15 2.8V11A1 1 0 0 1 14 12H1A1 1 0 0 1 0 11Z" fill="#8e8e8e"/></svg>
<div class="t" style="left:2013.5px;top:923.15px;font-size:14px;color:#a8a8a8;">hooks</div>
<div class="a" style="left:1927px;top:945px;width:376px;height:1px;background:#2e2e2e;"></div>
<div class="a" style="left:1927px;top:946px;width:7px;height:32px;background:#9a9a9a;"></div>
<div class="t" style="left:1942.6px;top:954.50px;font-size:15px;color:#e0e0e0;font-weight:bold;">Repositories</div>
<svg style="left:2281px;top:957px;" width="12" height="7" viewBox="0 0 12 7" fill="none"><path d="M0.5 0.5H11.5L6 6.5Z" fill="#9a9a9a"/></svg>
<div class="a" style="left:1934px;top:977px;width:369px;height:1px;background:#2e2e2e;"></div>
<div class="t" style="left:1934px;top:990.46px;font-size:16px;color:#dcdcdc;font-weight:bold;">vibe-kanban</div>
<svg style="left:2281px;top:995px;" width="12" height="7" viewBox="0 0 12 7" fill="none"><path d="M0.5 0.5H11.5L6 6.5Z" fill="#9a9a9a"/></svg>
<svg style="left:1937px;top:1022px;" width="16" height="16" viewBox="0 0 16 16" fill="none"><circle cx="2.5" cy="13.5" r="1.8" stroke="#9a9a9a" stroke-width="1.2"/><circle cx="13.3" cy="2.5" r="1.8" fill="#9a9a9a"/><path d="M2.5 11.5V0.5M2.5 9C2.5 6.5 4 5.5 7 5.5C10 5.5 13.3 5.5 13.3 4" stroke="#9a9a9a" stroke-width="1.3"/><circle cx="2.5" cy="1.8" r="1.5" fill="#9a9a9a"/></svg>
<svg style="left:1963px;top:1024px;" width="16" height="12" viewBox="0 0 16 12" fill="none"><path d="M0.5 6H15M10 1L15 6L10 11" stroke="#9a9a9a" stroke-width="1.3"/></svg>
<svg style="left:1989px;top:1022px;" width="16" height="16" viewBox="0 0 16 16" fill="none"><circle cx="8" cy="8" r="6" stroke="#9a9a9a" stroke-width="1.3"/><circle cx="8" cy="8" r="2.5" stroke="#9a9a9a" stroke-width="1.3"/><path d="M8 0V2M8 14V16M0 8H2M14 8H16" stroke="#9a9a9a" stroke-width="1.3"/></svg>
<div class="a" style="left:2013px;top:1014px;width:210px;height:32px;background:#262626;border-radius:4px"></div>
<div class="t" style="left:2021.4px;top:1023.34px;font-size:14.6px;color:#d0d0d0;">louis/workspace-onboarding</div>
<svg style="left:2206px;top:1028px;" width="8" height="5" viewBox="0 0 8 5" fill="none"><path d="M0.6 0.6L4 4L7.4 0.6" stroke="#ccc" stroke-width="1.1"/></svg>
<svg style="left:2231px;top:1022px;" width="16" height="16" viewBox="0 0 16 16" fill="none"><path d="M6.5 2.5H1V15H13.5V9.5" stroke="#9a9a9a" stroke-width="1.4"/><path d="M7 9L15 1M9.5 1H15V6.5" stroke="#9a9a9a" stroke-width="1.4"/></svg>
<div class="t" style="left:2271.5px;top:1023.30px;font-size:15px;color:#d9822b;">7</div>
<svg style="left:2282px;top:1023px;" width="11" height="14" viewBox="0 0 11 14" fill="none"><path d="M5.5 13.5V1M1 5.5L5.5 1L10 5.5" stroke="#d9822b" stroke-width="1.4"/></svg>
<svg style="left:1935px;top:1050px;" width="12" height="14" viewBox="0 0 12 14" fill="none"><path d="M0.7 0.7H7.5L11.3 4.5V13.3H0.7Z" stroke="#8a8a8a" stroke-width="1.2" stroke-linejoin="round"/><path d="M3.5 9H8" stroke="#8a8a8a" stroke-width="1.2"/></svg>
<div class="t" style="left:1953px;top:1048.47px;font-size:14.8px;color:#a0a0a0;-webkit-text-stroke:0.35px #a0a0a0;">13 files changed</div>
<div class="t" style="right:64.5px;top:1048.24px;font-size:14.6px;color:#a0a0a0;font-weight:bold;"><span style="color:#62b64d">+248</span> <span style="color:#d95a52">-4</span></div>
<div class="a" style="left:1934px;top:1075px;width:55px;height:29px;background:#262626;border-radius:4px 0 0 4px"></div>
<div class="a" style="left:1991px;top:1075px;width:31px;height:29px;background:#262626;border-radius:0 4px 4px 0"></div>
<div class="t" style="left:1942.6px;top:1082.41px;font-size:14.4px;color:#d8d8d8;-webkit-text-stroke:0.3px #d8d8d8;">Merge</div>
<svg style="left:1999px;top:1086px;" width="14" height="8" viewBox="0 0 14 8" fill="none"><path d="M0.8 0.8L7 6.8L13.2 0.8" stroke="#aaa" stroke-width="1.2"/></svg>
<div class="t" style="left:1934px;top:1124.86px;font-size:16px;color:#dcdcdc;font-weight:bold;">Advanced</div>
<svg style="left:2285px;top:1127px;" width="7" height="11" viewBox="0 0 7 11" fill="none"><path d="M0.5 0.5V10.5L6.5 5.5Z" fill="#9a9a9a"/></svg>
</div>
<div class="a" style="left:56px;top:38px;width:2247px;height:1244px;border-radius:10px;border:1px solid #464646;pointer-events:none"></div>
</body></html>
